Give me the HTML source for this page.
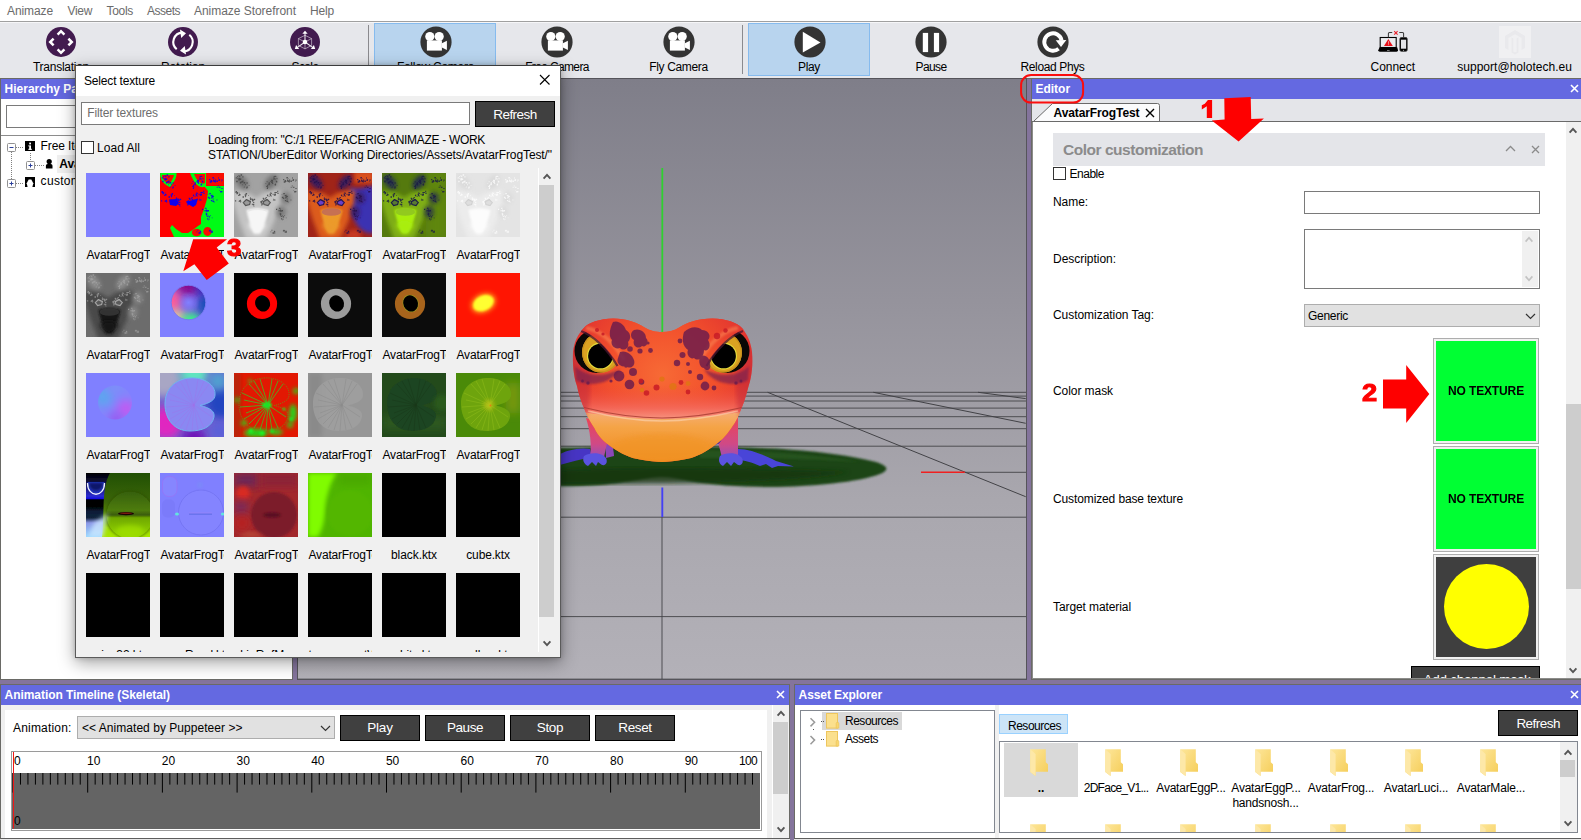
<!DOCTYPE html>
<html>
<head>
<meta charset="utf-8">
<title>Animaze Editor</title>
<style>
*{box-sizing:border-box;margin:0;padding:0}
html,body{width:1581px;height:840px;overflow:hidden;background:#84749c}
body{font-family:"Liberation Sans",sans-serif;font-size:12px;color:#000;position:relative}
.abs{position:absolute}
.t{position:absolute;white-space:nowrap;line-height:14px}
#menubar{left:0;top:0;width:1581px;height:21px;background:#fff}
#menubar .t{color:#6b6b6b}
#menuline{left:0;top:21px;width:1581px;height:1px;background:#a0a0a0}
#toolbar{left:0;top:22px;width:1581px;height:56px;background:#e6e7eb}
#toolline{left:0;top:78px;width:1581px;height:1px;background:#6a6a66}
.sel{position:absolute;background:#b8d4ee;border:1px solid #86bbee}
.ic{position:absolute;width:34px;height:34px;overflow:visible}
.sep{position:absolute;top:25px;width:1px;height:49px;background:#8a8a8e}
.title{position:absolute;height:20px;background:#6469e1}
.title .t{color:#fff}
.btn{position:absolute;background:#404040;border:1px solid #000}
.btn .t{color:#fff}
.cb{position:absolute;width:13px;height:13px;background:#fff;border:1px solid #333}
.inp{position:absolute;background:#fff;border:1px solid #7a7a7a}
.combo{position:absolute;background:#e1e1e1;border:1px solid #adadad}
.th{position:absolute;width:64px;height:64px;overflow:hidden}
.lbl{position:absolute;width:64px;height:16px;overflow:hidden}
.sb{position:absolute;background:#f0f0f0}
.thumb{position:absolute;background:#cdcdcd}
</style>
</head>
<body>

<svg width="0" height="0" style="position:absolute"><defs><path id="spk" d="M5.9,9.4h1.2v1.2h-1.2zM7.4,8.1h1.5v1.5h-1.5zM8.4,7.6h1.2v1.2h-1.2zM6.4,6.0h0.7v0.7h-0.7zM9.5,9.1h1.5v1.5h-1.5zM8.0,11.5h0.7v0.7h-0.7zM5.5,1.9h0.7v0.7h-0.7zM11.1,11.3h0.9v0.9h-0.9zM7.7,9.1h0.7v0.7h-0.7zM6.7,8.9h0.7v0.7h-0.7zM11.6,9.4h1v1h-1zM4.4,2.3h0.7v0.7h-0.7zM10.3,13.4h0.7v0.7h-0.7zM5.2,5.3h1.2v1.2h-1.2zM14.6,12.2h0.9v0.9h-0.9zM12.9,9.6h1v1h-1zM2.0,4.2h0.9v0.9h-0.9zM8.3,3.2h1.2v1.2h-1.2zM4.8,5.0h0.9v0.9h-0.9zM12.2,14.4h1.2v1.2h-1.2zM5.4,3.2h1v1h-1zM9.8,14.2h0.7v0.7h-0.7zM4.3,6.1h1.5v1.5h-1.5zM3.3,4.7h1v1h-1zM1.6,4.4h1.2v1.2h-1.2zM4.8,2.8h0.9v0.9h-0.9zM3.2,3.1h0.9v0.9h-0.9zM12.4,13.7h1.2v1.2h-1.2zM4.6,5.2h1.5v1.5h-1.5zM5.7,5.5h1.5v1.5h-1.5zM2.2,7.7h1.5v1.5h-1.5zM6.6,1.3h1.5v1.5h-1.5zM12.8,13.4h1v1h-1zM5.9,8.8h1.5v1.5h-1.5zM41.0,5.7h0.9v0.9h-0.9zM36.3,8.0h0.7v0.7h-0.7zM38.8,6.0h0.7v0.7h-0.7zM42.5,4.8h0.7v0.7h-0.7zM40.4,5.3h0.9v0.9h-0.9zM42.5,5.3h1v1h-1zM34.5,10.1h0.9v0.9h-0.9zM34.7,8.9h1v1h-1zM35.0,11.5h0.7v0.7h-0.7zM37.0,8.6h0.7v0.7h-0.7zM40.3,3.1h0.9v0.9h-0.9zM33.1,11.8h1.2v1.2h-1.2zM32.0,13.0h0.7v0.7h-0.7zM32.7,12.8h1.2v1.2h-1.2zM41.4,10.2h0.7v0.7h-0.7zM32.6,8.2h1v1h-1zM37.0,6.8h1.2v1.2h-1.2zM37.2,8.4h1.5v1.5h-1.5zM41.4,3.1h0.9v0.9h-0.9zM32.8,14.8h1.2v1.2h-1.2zM41.8,8.1h1.5v1.5h-1.5zM39.7,5.2h1.2v1.2h-1.2zM38.2,10.0h1v1h-1zM39.2,4.7h0.9v0.9h-0.9zM33.3,13.7h1v1h-1zM41.7,7.0h0.7v0.7h-0.7zM34.1,10.9h0.9v0.9h-0.9zM39.5,3.2h1.2v1.2h-1.2zM37.5,7.0h1.5v1.5h-1.5zM40.6,11.0h1.5v1.5h-1.5zM40.6,2.7h1v1h-1zM34.8,10.2h1.2v1.2h-1.2zM38.0,8.9h0.9v0.9h-0.9zM31.5,10.1h0.7v0.7h-0.7zM53.6,6.9h1v1h-1zM61.4,6.5h1.2v1.2h-1.2zM50.6,7.1h1.5v1.5h-1.5zM58.0,4.5h1v1h-1zM54.9,7.6h0.9v0.9h-0.9zM52.6,8.2h0.7v0.7h-0.7zM53.0,6.8h1.2v1.2h-1.2zM53.6,7.8h1.2v1.2h-1.2zM55.2,6.6h1v1h-1zM54.0,5.4h0.7v0.7h-0.7zM49.8,8.5h1v1h-1zM55.0,6.5h0.7v0.7h-0.7zM52.4,4.0h1.5v1.5h-1.5zM53.2,6.5h0.9v0.9h-0.9zM59.2,6.1h0.9v0.9h-0.9zM54.7,8.2h1.2v1.2h-1.2zM49.1,6.1h1.2v1.2h-1.2zM61.0,8.4h0.7v0.7h-0.7zM58.4,6.5h1.5v1.5h-1.5zM56.4,7.5h1.5v1.5h-1.5zM50.6,7.7h1.5v1.5h-1.5zM49.7,8.3h1.5v1.5h-1.5zM2.8,19.6h0.7v0.7h-0.7zM5.2,19.8h0.7v0.7h-0.7zM5.0,20.9h1.5v1.5h-1.5zM1.6,17.9h1.5v1.5h-1.5zM4.2,21.8h1.2v1.2h-1.2zM2.9,19.0h1.2v1.2h-1.2zM8.5,23.3h1.5v1.5h-1.5zM3.3,19.6h1v1h-1zM1.4,19.0h0.9v0.9h-0.9zM2.0,18.1h1v1h-1zM2.4,19.7h1.5v1.5h-1.5zM1.4,18.9h0.9v0.9h-0.9zM17.1,25.4h1.2v1.2h-1.2zM18.0,26.9h1.5v1.5h-1.5zM15.9,25.8h1.5v1.5h-1.5zM15.8,24.8h1v1h-1zM19.5,26.6h0.9v0.9h-0.9zM11.0,23.3h0.9v0.9h-0.9zM20.0,25.8h1.2v1.2h-1.2zM10.6,21.2h0.9v0.9h-0.9zM11.4,22.3h0.7v0.7h-0.7zM11.2,22.6h1v1h-1zM10.8,21.4h1.5v1.5h-1.5zM19.1,29.1h1.2v1.2h-1.2zM11.6,20.1h1.5v1.5h-1.5zM19.5,26.7h0.7v0.7h-0.7zM10.9,23.1h0.7v0.7h-0.7zM16.1,24.3h0.7v0.7h-0.7zM17.9,25.8h1.5v1.5h-1.5zM14.1,22.1h0.7v0.7h-0.7zM35.9,22.1h1v1h-1zM40.5,20.9h1.5v1.5h-1.5zM36.6,22.4h1.2v1.2h-1.2zM38.5,20.7h1v1h-1zM35.8,20.9h0.9v0.9h-0.9zM35.6,20.6h1.5v1.5h-1.5zM36.6,19.7h1.2v1.2h-1.2zM41.9,18.9h1v1h-1zM39.8,21.2h1.5v1.5h-1.5zM43.3,17.7h1v1h-1zM40.4,18.9h1.5v1.5h-1.5zM43.2,18.3h0.9v0.9h-0.9zM36.4,19.3h0.7v0.7h-0.7zM43.4,19.8h1.2v1.2h-1.2zM31.9,26.1h1.2v1.2h-1.2zM34.6,22.8h1v1h-1zM28.9,25.1h1.5v1.5h-1.5zM27.9,28.7h0.7v0.7h-0.7zM28.7,24.8h1.2v1.2h-1.2zM27.1,29.1h0.9v0.9h-0.9zM27.0,27.8h1.2v1.2h-1.2zM26.5,28.7h1.5v1.5h-1.5zM31.5,24.2h1v1h-1zM29.5,25.9h1v1h-1zM33.3,21.6h0.9v0.9h-0.9zM31.1,25.3h1v1h-1zM28.0,27.2h1v1h-1zM32.9,22.0h1.2v1.2h-1.2zM32.3,24.1h0.7v0.7h-0.7zM26.2,28.2h0.9v0.9h-0.9zM4.9,27.2h1.2v1.2h-1.2zM0.9,27.4h0.9v0.9h-0.9zM1.0,27.3h1.2v1.2h-1.2zM4.7,28.1h1v1h-1zM6.1,28.6h1v1h-1zM6.0,26.8h1v1h-1zM6.3,27.8h1v1h-1zM4.8,28.2h0.9v0.9h-0.9zM39.8,26.7h0.9v0.9h-0.9zM38.9,26.8h0.7v0.7h-0.7zM39.4,25.7h0.7v0.7h-0.7zM39.6,26.2h0.7v0.7h-0.7zM40.6,26.6h0.9v0.9h-0.9zM39.7,26.5h0.9v0.9h-0.9zM51.7,22.6h0.7v0.7h-0.7zM53.7,28.6h0.9v0.9h-0.9zM51.2,24.7h0.9v0.9h-0.9zM49.2,25.1h1v1h-1zM48.7,24.2h0.9v0.9h-0.9zM52.9,23.1h1v1h-1zM49.6,20.0h1.2v1.2h-1.2zM53.7,28.8h0.7v0.7h-0.7zM48.9,20.5h0.7v0.7h-0.7zM52.9,27.5h1v1h-1zM51.6,21.7h1v1h-1zM51.4,23.3h1.5v1.5h-1.5zM51.1,27.2h1v1h-1zM51.2,24.6h1v1h-1zM47.9,23.7h1.5v1.5h-1.5zM50.7,21.9h1v1h-1zM52.4,27.6h1.5v1.5h-1.5zM52.2,22.7h1.5v1.5h-1.5zM52.7,25.5h1v1h-1zM56.5,26.5h0.9v0.9h-0.9zM50.9,27.0h1.2v1.2h-1.2zM47.6,21.4h0.7v0.7h-0.7zM48.0,37.0h1v1h-1zM45.2,34.7h1.2v1.2h-1.2zM45.5,36.9h1.5v1.5h-1.5zM46.6,37.8h1v1h-1zM47.9,42.1h0.7v0.7h-0.7zM47.2,43.0h1v1h-1zM47.1,45.2h1.2v1.2h-1.2zM49.2,45.8h0.7v0.7h-0.7zM49.3,43.4h0.9v0.9h-0.9zM46.1,36.6h0.9v0.9h-0.9zM46.2,37.7h1v1h-1zM51.8,44.6h0.7v0.7h-0.7zM45.6,37.8h0.7v0.7h-0.7zM50.1,42.3h0.7v0.7h-0.7zM47.3,37.1h1.5v1.5h-1.5zM44.4,37.3h0.9v0.9h-0.9zM45.7,39.8h1v1h-1zM46.2,42.3h1v1h-1zM45.8,40.4h1.5v1.5h-1.5zM48.8,43.2h1.2v1.2h-1.2zM42.0,35.8h1.2v1.2h-1.2zM48.1,46.6h0.7v0.7h-0.7zM40.0,57.9h1.2v1.2h-1.2zM40.1,59.3h1.2v1.2h-1.2zM39.8,57.8h1v1h-1zM36.4,58.4h0.9v0.9h-0.9zM38.5,59.3h1.5v1.5h-1.5zM37.5,56.8h0.9v0.9h-0.9zM50.5,59.4h0.7v0.7h-0.7zM49.9,57.3h1.2v1.2h-1.2zM51.3,57.8h1.5v1.5h-1.5zM51.4,58.7h1.2v1.2h-1.2zM48.9,57.2h1.2v1.2h-1.2zM49.5,56.7h0.9v0.9h-0.9zM61.2,18.1h1.2v1.2h-1.2zM57.8,12.1h0.7v0.7h-0.7zM59.2,13.8h1.2v1.2h-1.2zM59.4,16.9h0.7v0.7h-0.7zM61.4,14.9h1.2v1.2h-1.2zM58.1,13.5h0.7v0.7h-0.7zM60.2,18.0h1.5v1.5h-1.5zM56.7,13.8h1v1h-1zM19.6,33.1h0.7v0.7h-0.7zM17.8,30.7h1v1h-1zM18.1,30.7h1v1h-1zM18.8,30.9h1.5v1.5h-1.5zM27.4,30.0h0.9v0.9h-0.9zM28.1,30.9h0.7v0.7h-0.7zM27.8,30.3h1.2v1.2h-1.2zM27.2,31.2h1.2v1.2h-1.2z"/><filter id="f1" x="-20%" y="-20%" width="140%" height="140%"><feGaussianBlur stdDeviation="1"/></filter><filter id="f2" x="-30%" y="-30%" width="160%" height="160%"><feGaussianBlur stdDeviation="2.2"/></filter><filter id="f4" x="-40%" y="-40%" width="180%" height="180%"><feGaussianBlur stdDeviation="4"/></filter><filter id="f05"><feGaussianBlur stdDeviation=".5"/></filter><filter id="f03"><feGaussianBlur stdDeviation=".3"/></filter><path id="chin" d="M12.5,37 Q23,33.5 34.5,37 Q33,47 26,60 H20 Q14,47 12.5,37 Z"/><path id="pad" d="M30,5 C44,4 56,12 55,22 C55,27 50,30 40,32.5 C50,35 55,38 54,44 C52,54 42,58 30,58 C14,58 5,46 5,31 C5,16 15,6 30,5 Z"/><g id="rays" fill="none" stroke-width=".7"><path d="M34,32 L8,20 M34,32 L6,34 M34,32 L10,46 M34,32 L20,55 M34,32 L32,58 M34,32 L44,55 M34,32 L15,11 M34,32 L26,6 M34,32 L38,6 M34,32 L49,11 M34,32 L52,44 M34,32 L12,40 M34,32 L10,27 M34,32 L20,8 M34,32 L26,57 M34,32 L38,57 M34,32 L44,8 M34,32 L15,51"/></g><linearGradient id="fg" x1="0" y1="0" x2="1" y2="1"><stop offset="0" stop-color="#fde69a"/><stop offset="1" stop-color="#f5cd58"/></linearGradient></defs></svg>
<div id="menubar" class="abs">
<span class="t" style="left:7.00px;top:3.84px;font-size:12px;line-height:14px;letter-spacing:-0.098px;">Animaze</span>
<span class="t" style="left:67.50px;top:3.84px;font-size:12px;line-height:14px;letter-spacing:-0.324px;">View</span>
<span class="t" style="left:106.50px;top:3.84px;font-size:12px;line-height:14px;letter-spacing:-0.303px;">Tools</span>
<span class="t" style="left:147.00px;top:3.84px;font-size:12px;line-height:14px;letter-spacing:-0.502px;">Assets</span>
<span class="t" style="left:194.00px;top:3.84px;font-size:12px;line-height:14px;letter-spacing:-0.040px;">Animaze Storefront</span>
<span class="t" style="left:310.00px;top:3.84px;font-size:12px;line-height:14px;letter-spacing:-0.170px;">Help</span>
</div><div id="menuline" class="abs"></div>
<div id="toolbar" class="abs"></div><div class="abs" style="left:0;top:22px;width:1581px;height:1px;background:#f6f6f8"></div>
<div class="sel" style="left:374px;top:23px;width:122px;height:53px"></div>
<div class="sel" style="left:748px;top:23px;width:122px;height:53px"></div>
<div class="sep" style="left:368px"></div><div class="sep" style="left:742px"></div>
<svg class="ic" style="left:44px;top:25px" viewBox="-17 -17 34 34"><circle r="15.0" fill="#421b4f"/><g fill="none" stroke="#fff" stroke-width="2.5"><polyline transform="rotate(0)" points="-3.4,-7.4 0,-10.8 3.4,-7.4"/><polyline transform="rotate(90)" points="-3.4,-7.4 0,-10.8 3.4,-7.4"/><polyline transform="rotate(180)" points="-3.4,-7.4 0,-10.8 3.4,-7.4"/><polyline transform="rotate(270)" points="-3.4,-7.4 0,-10.8 3.4,-7.4"/></g></svg>
<svg class="ic" style="left:166px;top:25px" viewBox="-17 -17 34 34"><circle r="15.0" fill="#421b4f"/><g fill="none" stroke="#fff" stroke-width="2.1"><path d="M-6.3,7.2 A9.4,9.4 0 0 1 -0.5,-9.4"/><path d="M6.3,-7.2 A9.4,9.4 0 0 1 0.5,9.4"/></g><g fill="#fff"><polygon points="-3,-12.6 3,-8.8 -1.8,-4.0"/><polygon points="3,12.6 -3,8.8 1.8,4.0"/></g></svg>
<svg class="ic" style="left:288px;top:25px" viewBox="-17 -17 34 34"><circle r="15.0" fill="#421b4f"/><g fill="none" stroke="#fff" stroke-opacity=".55" stroke-width="0.9"><polygon points="0,-6.7 6.6,-3.4 6.6,3.4 0,6.9 -6.6,3.4 -6.6,-3.4"/><path d="M-6.6,-3.4 L0,0 L6.6,-3.4 M0,0 V6.9"/></g><g stroke="#fff" stroke-width="1.05" fill="none" stroke-opacity=".9"><path d="M0,0 V-9 M0,0 L-7.6,5.4 M0,0 L7.6,5.4"/></g><g fill="#fff"><circle r="2.3"/><polygon points="0,-11.2 -2.7,-8.2 2.7,-8.2"/><polygon points="-10.2,7 -8.9,2.9 -5.9,6.9"/><polygon points="10.2,7 8.9,2.9 5.9,6.9"/></g></svg>
<svg class="ic" style="left:418.8px;top:25px" viewBox="-17 -17 34 34"><circle r="15.6" fill="#343434"/><g fill="#fff"><circle cx="-6.2" cy="-5.5" r="4.6"/><circle cx="3.2" cy="-5.5" r="4.6"/><rect x="-9.1" y="-1.6" width="15" height="10.2"/><polygon points="5.9,1.2 10.9,-1.2 10.9,8.1 5.9,5.6"/></g></svg>
<svg class="ic" style="left:540.1px;top:25px" viewBox="-17 -17 34 34"><circle r="15.6" fill="#343434"/><g fill="#fff"><circle cx="-6.2" cy="-5.5" r="4.6"/><circle cx="3.2" cy="-5.5" r="4.6"/><rect x="-9.1" y="-1.6" width="15" height="10.2"/><polygon points="5.9,1.2 10.9,-1.2 10.9,8.1 5.9,5.6"/></g></svg>
<svg class="ic" style="left:662.1px;top:25px" viewBox="-17 -17 34 34"><circle r="15.6" fill="#343434"/><g fill="#fff"><circle cx="-6.2" cy="-5.5" r="4.6"/><circle cx="3.2" cy="-5.5" r="4.6"/><rect x="-9.1" y="-1.6" width="15" height="10.2"/><polygon points="5.9,1.2 10.9,-1.2 10.9,8.1 5.9,5.6"/></g></svg>
<svg class="ic" style="left:793px;top:25px" viewBox="-17 -17 34 34"><circle r="15.6" fill="#343434"/><polygon fill="#fff" points="-7.2,-10.3 -7.2,10.6 10.5,0.4"/></svg>
<svg class="ic" style="left:914px;top:25px" viewBox="-17 -17 34 34"><circle r="15.6" fill="#343434"/><rect fill="#fff" x="-8.2" y="-9.1" width="5.3" height="19.2"/><rect fill="#fff" x="2.9" y="-9.1" width="5.2" height="19.2"/></svg>
<svg class="ic" style="left:1036px;top:25px" viewBox="-17 -17 34 34"><circle r="15.6" fill="#343434"/><path fill="none" stroke="#fff" stroke-width="3.9" d="M5.6,6.7 A8.7,8.7 0 1 1 8.6,-1.5"/><polygon fill="#fff" points="2.7,-1.8 13.3,-2.0 8.0,5.1"/></svg>
<svg class="abs" style="left:1370px;top:24px;width:50px;height:34px" viewBox="0 0 50 34">
<rect x="10.2" y="13.5" width="16" height="10" fill="#ecedf0" stroke="#000" stroke-width="1.1"/>
<path d="M9.6,23.2 H27.2 L28,26.3 Q28,27.7 26.6,27.7 H9.8 Q8.2,27.7 8.3,26.3 Z" fill="#000"/>
<rect x="17" y="26" width="2.6" height="1" fill="#777"/>
<polygon points="18.4,15 22.8,21.9 14,21.9" fill="#e8111a"/>
<rect x="18.05" y="17.2" width=".8" height="2.6" fill="#f6b0b0"/><rect x="18.05" y="20.3" width=".8" height=".8" fill="#f6b0b0"/>
<rect x="29.9" y="13.5" width="7.3" height="13.8" rx="1.4" fill="#000" stroke="#333" stroke-width=".8"/>
<rect x="31" y="15.7" width="5.1" height="9" fill="#e2e3e7"/>
<circle cx="33.55" cy="26.2" r=".5" fill="#ddd"/>
<path d="M18.4,13.2 V9.6 Q18.4,8.5 19.5,8.5 H22.2 M29.3,8.5 H32.5 Q33.6,8.5 33.6,9.6 V13.2" fill="none" stroke="#3a3a3a" stroke-width="1.05"/>
<path d="M24.2,7.2 L27.6,10.6 M27.6,7.2 L24.2,10.6" stroke="#e8202a" stroke-width="1.1" fill="none"/>
</svg>
<div class="abs" style="left:1499px;top:26px;width:32px;height:32px;background:#f0f0f2"><svg viewBox="0 0 32 32" width="32" height="32"><path d="M16,4 L26,10 V22 L22.5,24 V12 L16,8.2 L9.5,12 V24 L6,22 V10 Z M14.3,12.5 V25.5 L16,26.6 L17.7,25.5 V12.5 L19.5,11.5 V26.6 L16,28.6 L12.5,26.6 V11.5 Z" fill="#e9e9ec"/></svg></div>
<span class="t" style="left:33.00px;top:59.84px;font-size:12px;line-height:14px;letter-spacing:-0.265px;">Translation</span>
<span class="t" style="left:161.00px;top:59.84px;font-size:12px;line-height:14px;letter-spacing:-0.087px;">Rotation</span>
<span class="t" style="left:291.50px;top:59.84px;font-size:12px;line-height:14px;letter-spacing:-0.604px;">Scale</span>
<span class="t" style="left:396.90px;top:59.84px;font-size:12px;line-height:14px;letter-spacing:-0.269px;">Follow Camera</span>
<span class="t" style="left:525.20px;top:59.84px;font-size:12px;line-height:14px;letter-spacing:-0.645px;">Free Camera</span>
<span class="t" style="left:649.30px;top:59.84px;font-size:12px;line-height:14px;letter-spacing:-0.361px;">Fly Camera</span>
<span class="t" style="left:798.00px;top:59.84px;font-size:12px;line-height:14px;letter-spacing:-0.336px;">Play</span>
<span class="t" style="left:915.50px;top:59.84px;font-size:12px;line-height:14px;letter-spacing:-0.605px;">Pause</span>
<span class="t" style="left:1020.50px;top:59.84px;font-size:12px;line-height:14px;letter-spacing:-0.367px;">Reload Phys</span>
<span class="t" style="left:1370.60px;top:59.84px;font-size:12px;line-height:14px;letter-spacing:-0.042px;">Connect</span>
<span class="t" style="left:1457.25px;top:59.84px;font-size:12px;line-height:14px;letter-spacing:0.023px;">support@holotech.eu</span>
<div id="toolline" class="abs"></div>
<div class="abs" style="left:0;top:78px;width:293px;height:602px;background:#fff;border:1px solid #6a6a66"></div>
<div class="title" style="left:1px;top:79px;width:291px"><span class="t" style="left:3.60px;top:2.84px;font-size:12px;line-height:14px;font-weight:bold;">Hierarchy Panel</span></div>
<div class="inp" style="left:6px;top:105px;width:281px;height:23px"></div>
<div class="abs" style="left:1px;top:135px;width:291px;height:1px;background:#8c8c8c"></div>
<svg class="abs" style="left:0;top:136px;width:80px;height:60px" viewBox="0 136 80 60">
<g stroke="#808080" stroke-width="1" stroke-dasharray="1 1" fill="none"><path d="M11.5,152 V179 M16,147.5 H24 M30.5,153 V161 M35,165.5 H44 M16,183.5 H24"/></g>
<g fill="#fff" stroke="#919191"><rect x="7.5" y="143.5" width="8" height="8" rx="1"/><rect x="26.5" y="161.5" width="8" height="8" rx="1"/><rect x="7.5" y="179.5" width="8" height="8" rx="1"/></g>
<g stroke="#2a3f9a" stroke-width="1" fill="none"><path d="M9.5,147.5 H13.5 M28.5,165.5 H32.5 M30.5,163.5 V167.5 M9.5,183.5 H13.5 M11.5,181.5 V185.5"/></g>
<rect x="25" y="141" width="10" height="10" fill="#000"/><rect x="29.2" y="142.6" width="1.8" height="1.8" fill="#fff"/><rect x="29.2" y="145.4" width="1.8" height="4.4" fill="#fff"/><rect x="28.3" y="145.4" width="1" height="1" fill="#fff"/><rect x="28.3" y="148.8" width="3.6" height="1" fill="#fff"/>
<circle cx="49.2" cy="161.6" r="2.6" fill="#000"/><path d="M45.9,168.6 V165.8 Q45.9,164 47.6,164 H50.8 Q52.5,164 52.5,165.8 V168.6 Z" fill="#000"/>
<rect x="25" y="177" width="10" height="10" fill="#000"/><path d="M28.7,179.4 H31.3 L33.3,183.2 L32.4,187 H27.6 L26.7,183.2 Z" fill="#fff"/>
</svg>
<div class="abs" style="left:57px;top:155px;width:80px;height:18px;background:#f0f0f0"></div>
<span class="t" style="left:40.60px;top:138.84px;font-size:12px;line-height:14px;letter-spacing:-0.135px;">Free Items</span>
<span class="t" style="left:59.20px;top:156.84px;font-size:12px;line-height:14px;font-weight:bold;">AvatarFrogTest</span>
<span class="t" style="left:40.60px;top:174.34px;font-size:12px;line-height:14px;letter-spacing:0.310px;">customization</span>
<div class="abs" style="left:297px;top:78px;width:730px;height:602px;background:#55545a"></div>
<svg class="abs" style="left:298px;top:79px;width:728px;height:600px" viewBox="298 79 728 600">
<defs>
<linearGradient id="bg" x1="0" y1="79" x2="0" y2="679" gradientUnits="userSpaceOnUse"><stop offset="0" stop-color="#7f7e89"/><stop offset=".37" stop-color="#95939c"/><stop offset=".7" stop-color="#a9a7ae"/><stop offset="1" stop-color="#b3b1b8"/></linearGradient>
<radialGradient id="head" cx="662" cy="375" r="95" gradientUnits="userSpaceOnUse"><stop offset="0" stop-color="#f76a35"/><stop offset=".55" stop-color="#f2502c"/><stop offset="1" stop-color="#e23530"/></radialGradient>
<linearGradient id="jaw" x1="0" y1="408" x2="0" y2="462" gradientUnits="userSpaceOnUse"><stop offset="0" stop-color="#f6b080"/><stop offset=".35" stop-color="#f5a447"/><stop offset="1" stop-color="#f08a1c"/></linearGradient>
<linearGradient id="lip" x1="0" y1="385" x2="0" y2="418" gradientUnits="userSpaceOnUse"><stop offset="0" stop-color="#f0483a" stop-opacity="0"/><stop offset=".7" stop-color="#f46a5c" stop-opacity=".9"/><stop offset="1" stop-color="#f78f7c"/></linearGradient>
<linearGradient id="leg" x1="0" y1="420" x2="0" y2="468" gradientUnits="userSpaceOnUse"><stop offset="0" stop-color="#e8445a"/><stop offset=".5" stop-color="#d04a86"/><stop offset=".85" stop-color="#8a50c0"/><stop offset="1" stop-color="#5a4cd8"/></linearGradient>
<radialGradient id="iris" cx=".5" cy=".5" r=".5"><stop offset="0" stop-color="#e0a21c"/><stop offset=".8" stop-color="#d9a322"/><stop offset="1" stop-color="#e7d430"/></radialGradient>
<filter id="b1"><feGaussianBlur stdDeviation="1.2"/></filter><filter id="b2"><feGaussianBlur stdDeviation="2.2"/></filter><filter id="b05"><feGaussianBlur stdDeviation=".6"/></filter>
<clipPath id="hc"><path id="hp" d="M583.8,328 C588,323 600,318.6 613.3,318.6 C626,318.6 638,323 643.8,327 C650,331 656,332 662,332 C668,332 674,331 680,327 C686,323 698,318.6 712.4,318.6 C726,318.6 737,323 742,328 C747,334 751,342 752,352 C753,364 752,376 748.6,386 C746,396 744,403 741,409 C738,418 735,423 731.4,428 C726,436 720,442 712.4,447 C702,454 694,458 683.8,459.5 C676,461 668,462 662,462 C656,462 648,461 640,459.5 C630,458 622,454 611.4,447 C604,442 598,436 594.3,428 C591,423 588,418 584.8,410 C582,403 579,396 577,386 C573.5,376 572.5,364 573,352 C574,342 578,334 583.8,328 Z"/></clipPath>
</defs>
<rect x="298" y="79" width="728" height="600" fill="url(#bg)"/><rect x="298" y="678" width="728" height="1" fill="#55545a" opacity=".4"/>
<g stroke="#444448" stroke-width="1" fill="none" opacity=".9">
<path d="M298,392.3 H1026 M298,396.1 H1026 M298,401 H1026 M298,408.1 H1026 M298,416.7 H1026 M298,428.7 H1026 M298,446.2 H1026 M964.8,472.3 H1026 M298,517.2 H1026 M298,616.6 H1026 M662,517.2 V679"/>
<path d="M767.6,392.3 L1025.7,496.7 M873.3,392.3 L1025.7,423.3 M978,392.3 L1025.7,398.6" stroke="#38383c"/>
</g>
<line x1="662.3" y1="168" x2="662.3" y2="335" stroke="#2fd030" stroke-width="1.8"/>
<line x1="921" y1="472.3" x2="964.8" y2="472.3" stroke="#f02020" stroke-width="1.5"/>

<path filter="url(#b1)" d="M540,449 C600,446 700,446 760,448 C800,449 850,455 876,462 C888,466 890,470 880,474 C860,482 810,487 770,487 C740,487 712,485 690,481 C680,479 670,477 662,477 C650,477 630,482 600,485 C580,486.5 560,486.5 540,486 Z" fill="#1d4519"/>
<path filter="url(#b2)" d="M560,470 C640,466 760,468 850,472 C800,482 700,484 560,484 Z" fill="#143610" opacity=".8"/>
<path filter="url(#b1)" d="M700,450 C760,450 820,455 860,462 C800,458 740,458 700,458 Z" fill="#2a5a22" opacity=".7"/>
<line x1="662.3" y1="487.5" x2="662.3" y2="517" stroke="#4440f4" stroke-width="1.9"/>
<g filter="url(#b05)">
<path d="M738,449 C750,449 764,455 776,461 L794,466.5 L778,466 L772,468 L766,464 L760,466 C752,462 744,461 738,459 Z" fill="#4a44d8"/>
<path d="M556,456 C566,450 580,447 590,449 L592,457 C582,459 570,462 556,466 Z" fill="#4636c4"/><path d="M604,430 C610,436 614,448 614,456 L606,458 C606,448 604,438 602,432 Z" fill="#8a46b8"/>
<path d="M586,418 C590,430 592,446 590,456 L604,458 C606,446 610,432 612,424 Z" fill="url(#leg)"/>
<path d="M712,424 C716,436 720,448 722,458 L738,456 C738,444 738,430 738,416 Z" fill="url(#leg)"/>
<path d="M584,456 C590,452 602,452 606,458 C608,462 606,466 602,465 L598,462 L596,466 L592,462 L588,466 C584,464 582,460 584,456 Z" fill="#5a52e0"/>
<path d="M720,456 C726,452 738,452 742,458 C744,462 742,466 738,465 L734,462 L731,466 L727,462 L723,466 C719,464 718,460 720,456 Z" fill="#5a52e0"/>
<path d="M712,430 C716,426 722,428 722,436 C722,442 718,446 714,444 Z" fill="#3a30b0"/>
</g>
<use href="#hp" fill="url(#head)"/>
<g clip-path="url(#hc)">
<rect x="560" y="385" width="210" height="34" fill="url(#lip)"/>
<path d="M560,408 C600,416 640,419 662,419 C684,419 724,416 764,408 V470 H560 Z" fill="url(#jaw)"/>
<path d="M584,407.5 C610,414 640,418 662,418 C684,418 714,414 742,407.5" stroke="#a83a30" stroke-width="1.2" fill="none" opacity=".8"/>
<path d="M588,411 C612,417 642,421 662,421 C682,421 712,417 738,411" stroke="#fbd0a8" stroke-width="1.6" fill="none" opacity=".7" filter="url(#b05)"/>
<ellipse cx="662" cy="448" rx="50" ry="14" fill="#f19526" opacity=".6" filter="url(#b2)"/>
<ellipse cx="580" cy="385" rx="10" ry="40" fill="#c02a3a" opacity=".5" filter="url(#b2)"/>
<ellipse cx="746" cy="385" rx="10" ry="40" fill="#c02a3a" opacity=".5" filter="url(#b2)"/>
<!-- eyes -->
<ellipse cx="597" cy="351" rx="22.5" ry="22" fill="#0a0806"/>
<ellipse cx="601" cy="352.5" rx="19" ry="20" fill="#d9a222"/>
<ellipse cx="601" cy="352.5" rx="18.4" ry="19.4" fill="none" stroke="#c8901c" stroke-width="1.2"/>
<circle cx="600.4" cy="356" r="13.4" fill="#e6de3c"/>
<circle cx="600.4" cy="356" r="12.3" fill="#000"/>
<ellipse cx="727" cy="351" rx="22.5" ry="22" fill="#0a0806"/>
<ellipse cx="723" cy="352.5" rx="19" ry="20" fill="#d9a222"/>
<ellipse cx="723" cy="352.5" rx="18.4" ry="19.4" fill="none" stroke="#c8901c" stroke-width="1.2"/>
<circle cx="723.6" cy="356" r="13.4" fill="#e6de3c"/>
<circle cx="723.6" cy="356" r="12.3" fill="#000"/>
<!-- brows -->
<path d="M572,326 L581.5,330.5 C592,334 606,346 617.5,365.5 L628,375 L650,372 L662,350 L662,318 L600,310 Z" fill="url(#head)"/>
<path d="M752,326 L742.5,330.5 C732,334 718,346 706.5,365.5 L696,375 L674,372 L662,350 L662,318 L724,310 Z" fill="url(#head)"/>
<path d="M581,331 C592,335 606,347 617.5,366" stroke="#4a1430" stroke-width="2.2" fill="none" opacity=".75" filter="url(#b05)"/>
<path d="M743,331 C732,335 718,347 706.5,366" stroke="#4a1430" stroke-width="2.2" fill="none" opacity=".75" filter="url(#b05)"/>
<path d="M586,328 C600,330 614,342 624,360" stroke="#fb8a56" stroke-width="4" fill="none" opacity=".55" filter="url(#b1)"/>
<path d="M738,328 C724,330 710,342 700,360" stroke="#fb8a56" stroke-width="4" fill="none" opacity=".55" filter="url(#b1)"/>
<path d="M575,366 C584,376 604,378 620,369 C612,384 588,388 576,380 Z" fill="#7a2250" opacity=".7" filter="url(#b1)"/>
<path d="M749,366 C740,376 720,378 704,369 C712,384 736,388 748,380 Z" fill="#7a2250" opacity=".7" filter="url(#b1)"/>
<!-- spots -->
<g fill="#6a1f4e" opacity=".82" filter="url(#b05)">
<path d="M613,322 C618,320 624,324 626,330 C630,332 632,338 628,342 C630,348 624,352 620,348 C614,350 610,344 612,340 C608,336 610,328 613,322 Z"/>
<path d="M634,330 C640,328 646,332 646,338 C650,342 646,348 642,346 C638,350 632,346 634,340 C630,338 630,332 634,330 Z"/>
<path d="M620,352 C626,350 632,354 634,360 C636,366 630,370 626,366 C620,368 616,362 618,358 Z"/>
<circle cx="630" cy="349" r="2.8"/><circle cx="640" cy="351" r="2.6"/><circle cx="650.5" cy="350.5" r="2.4"/><circle cx="648" cy="343" r="1.6"/><circle cx="616" cy="336" r="2.2"/>
<circle cx="633" cy="372" r="4"/><circle cx="629.5" cy="384.5" r="4.8"/><circle cx="619" cy="376" r="5.4"/><circle cx="641.5" cy="382" r="2.8"/><circle cx="626" cy="366" r="1.8"/><circle cx="611" cy="381" r="1.6"/>
<path d="M684,332 C690,326 698,326 702,330 C708,330 712,336 708,340 C712,346 708,352 704,350 C704,358 698,362 694,358 C690,360 686,354 688,350 C682,346 682,338 684,332 Z"/>
<path d="M700,356 C706,354 710,358 710,364 C712,370 706,372 704,368 C700,368 698,362 700,356 Z"/>
<circle cx="680" cy="341" r="2.4"/><circle cx="682.5" cy="355" r="3"/><circle cx="677" cy="363" r="3.2"/><circle cx="688" cy="364" r="2"/><circle cx="700" cy="377" r="3.2"/><circle cx="705" cy="386" r="4.4"/><circle cx="714" cy="388" r="2.4"/><circle cx="690" cy="372" r="2"/>
<circle cx="588" cy="383" r="1.7"/><circle cx="582.5" cy="381" r="1.5"/><circle cx="736" cy="383" r="1.7"/><circle cx="741" cy="381" r="1.5"/>
</g>
<g fill="#c81c28" opacity=".85" filter="url(#b05)"><circle cx="646.5" cy="393" r="2.8"/><circle cx="656.5" cy="387.5" r="3"/><circle cx="641" cy="381" r="2.4"/><circle cx="688" cy="392" r="2.4"/><circle cx="681" cy="382.5" r="2.4"/><circle cx="717" cy="336" r="3.2"/><circle cx="725.5" cy="330.5" r="2.2"/><circle cx="597" cy="330" r="2"/><circle cx="603" cy="334" r="1.6"/></g>
<g fill="#e27418" opacity=".9" filter="url(#b05)"><circle cx="662" cy="379" r="2.6"/><circle cx="673" cy="386.5" r="3.6"/><circle cx="688" cy="383.5" r="2.4"/><circle cx="642" cy="390" r="2.2"/></g>
</g>
</svg>
<div class="abs" style="left:1031px;top:78px;width:550px;height:602px;background:#fff;border-left:1px solid #6a6a66;border-top:1px solid #6a6a66;border-bottom:1px solid #6a6a66"></div>
<div class="title" style="left:1032px;top:79px;width:549px"><span class="t" style="left:3.40px;top:2.84px;font-size:12px;line-height:14px;font-weight:bold;">Editor</span></div>
<svg class="abs" style="left:1570.0px;top:83.5px;width:9px;height:9px" viewBox="-1 -1 9 9"><path d="M0,0 L7,7 M7,0 L0,7" stroke="#fff" stroke-width="1.6" fill="none"/></svg>
<div class="abs" style="left:1032px;top:122px;width:549px;height:557px;border-left:1px solid #8c8c8a;border-bottom:1px solid #8c8c8a"></div>
<div class="abs" style="left:1032px;top:99px;width:549px;height:22px;background:#e4e5e9"></div>
<div class="abs" style="left:1032px;top:121px;width:549px;height:1px;background:#6a6a6a"></div>
<svg class="abs" style="left:1033px;top:102px;width:130px;height:21px" viewBox="1033 102 130 21"><path d="M1034,121 L1052.5,103.5 H1157.5 Q1159.5,103.5 1159.5,105.5 V121" fill="#fbfbfc" stroke="#6a6a6a" stroke-width="1"/></svg>
<span class="t" style="left:1053.60px;top:105.84px;font-size:12px;line-height:14px;letter-spacing:-0.111px;font-weight:bold;">AvatarFrogTest</span>
<svg class="abs" style="left:1144.5px;top:108.0px;width:10px;height:10px" viewBox="-1 -1 10 10"><path d="M0,0 L8,8 M8,0 L0,8" stroke="#000" stroke-width="1.4" fill="none"/></svg>
<div class="abs" style="left:1053px;top:133px;width:492px;height:33px;background:#e4e5e9"></div>
<span class="t" style="left:1063.00px;top:140.93px;font-size:15.5px;line-height:18px;letter-spacing:-0.473px;font-weight:bold;color:#8b8b8b;">Color customization</span>
<svg class="abs" style="left:1504.5px;top:145px;width:11px;height:7px" viewBox="0 0 11 7"><polyline points="1,6 5.5,1.5 10,6" fill="none" stroke="#8b8b8b" stroke-width="1.3"/></svg>
<svg class="abs" style="left:1530.5px;top:144.5px;width:9px;height:9px" viewBox="-1 -1 9 9"><path d="M0,0 L7,7 M7,0 L0,7" stroke="#8b8b8b" stroke-width="1.3" fill="none"/></svg>
<div class="cb" style="left:1053px;top:167px"></div>
<span class="t" style="left:1069.50px;top:166.84px;font-size:12px;line-height:14px;letter-spacing:-0.478px;">Enable</span>
<span class="t" style="left:1053.00px;top:194.84px;font-size:12px;line-height:14px;letter-spacing:-0.069px;">Name:</span>
<div class="inp" style="left:1304px;top:191px;width:236px;height:23px"></div>
<span class="t" style="left:1053.00px;top:252.14px;font-size:12px;line-height:14px;letter-spacing:-0.030px;">Description:</span>
<div class="inp" style="left:1304px;top:229px;width:236px;height:60px"></div>
<div class="abs" style="left:1522px;top:231px;width:16px;height:56px;background:#f0f0f0"></div>
<svg class="abs" style="left:1523.2px;top:235.3px;width:12px;height:10px" viewBox="-6 -5 12 10"><polyline points="-3.4,1.6 0,-2.2 3.4,1.6" fill="none" stroke="#c2c2c2" stroke-width="1.6"/></svg>
<svg class="abs" style="left:1523.2px;top:273px;width:12px;height:10px" viewBox="-6 -5 12 10"><polyline points="-3.4,-1.6 0,2.2 3.4,-1.6" fill="none" stroke="#c2c2c2" stroke-width="1.6"/></svg>
<span class="t" style="left:1053.00px;top:307.84px;font-size:12px;line-height:14px;letter-spacing:-0.046px;">Customization Tag:</span>
<div class="combo" style="left:1304px;top:304px;width:236px;height:23px"></div>
<span class="t" style="left:1308.00px;top:308.84px;font-size:12px;line-height:14px;letter-spacing:-0.288px;">Generic</span>
<svg class="abs" style="left:1525px;top:312.5px;width:11px;height:7px" viewBox="0 0 11 7"><polyline points="1,1 5.5,5.5 10,1" fill="none" stroke="#333" stroke-width="1.2"/></svg>
<div class="abs" style="left:1433px;top:338px;width:106px;height:106px;background:#f0f0f0;border:1px solid #adadad"></div>
<div class="abs" style="left:1436px;top:341px;width:100px;height:100px;background:#00ff33"></div>
<span class="t" style="left:1448.00px;top:384.34px;font-size:12px;line-height:14px;letter-spacing:-0.134px;font-weight:bold;transform:scaleY(1.08);">NO TEXTURE</span>
<span class="t" style="left:1053.00px;top:383.84px;font-size:12px;line-height:14px;letter-spacing:-0.068px;">Color mask</span>
<div class="abs" style="left:1433px;top:446px;width:106px;height:106px;background:#f0f0f0;border:1px solid #adadad"></div>
<div class="abs" style="left:1436px;top:449px;width:100px;height:100px;background:#00ff33"></div>
<span class="t" style="left:1448.00px;top:492.34px;font-size:12px;line-height:14px;letter-spacing:-0.134px;font-weight:bold;transform:scaleY(1.08);">NO TEXTURE</span>
<span class="t" style="left:1053.00px;top:491.84px;font-size:12px;line-height:14px;letter-spacing:-0.119px;">Customized base texture</span>
<div class="abs" style="left:1433px;top:554px;width:106px;height:106px;background:#f0f0f0;border:1px solid #adadad"></div>
<div class="abs" style="left:1436px;top:557px;width:100px;height:100px;background:#3f3f3f"><div class="abs" style="left:8px;top:7px;width:85px;height:85px;border-radius:50%;background:#ffff00"></div></div>
<span class="t" style="left:1053.00px;top:599.84px;font-size:12px;line-height:14px;letter-spacing:-0.091px;">Target material</span>
<div class="abs" style="left:1411px;top:666px;width:129px;height:12px;overflow:hidden"><div class="btn" style="left:0;top:0;width:129px;height:26px"><span class="t" style="left:11.60px;top:4.72px;font-size:13.5px;line-height:16px;letter-spacing:-0.267px;">Add channel mask</span></div></div>
<div class="sb" style="left:1566px;top:122px;width:15px;height:556px"></div>
<div class="thumb" style="left:1566px;top:404px;width:15px;height:185px"></div>
<svg class="abs" style="left:1567.3px;top:126.19999999999999px;width:12px;height:10px" viewBox="-6 -5 12 10"><polyline points="-3.4,1.6 0,-2.2 3.4,1.6" fill="none" stroke="#555" stroke-width="1.9"/></svg>
<svg class="abs" style="left:1567.3px;top:665px;width:12px;height:10px" viewBox="-6 -5 12 10"><polyline points="-3.4,-1.6 0,2.2 3.4,-1.6" fill="none" stroke="#555" stroke-width="1.9"/></svg>
<svg class="abs" style="left:1015px;top:70px;width:440px;height:360px;overflow:visible" viewBox="1015 70 440 360"><rect x="1021.1" y="75.1" width="62" height="27.5" rx="10" fill="none" stroke="#fb0d0d" stroke-width="2"/><polygon points="1224.3,98.2 1250.7,97 1251.2,118.9 1263.9,118.6 1238.6,141.4 1211.8,120.6 1224.6,119.6" fill="#fe0000"/><polygon points="1383,379.6 1406.2,379.6 1406.2,365 1429.3,394 1406.2,423 1406.2,408.5 1383,408.5" fill="#fe0000"/></svg>
<svg class="abs" style="left:1198px;top:98px;width:18px;height:22px" viewBox="1198 98 18 22"><polygon points="1212.1,100 1212.1,118 1206.8,118 1206.8,106.3 1201.8,109.4 1201.8,105.3 1204.8,103.7 1207.9,100" fill="#fe0000"/></svg>
<span class="t" style="left:1362.00px;top:379.96px;font-size:23.5px;line-height:27px;font-weight:bold;color:#fe0000;-webkit-text-stroke:1px #fe0000;transform:scaleX(1.16);transform-origin:0 0;">2</span>
<div class="abs" style="left:0;top:684px;width:790px;height:155px;background:#f0f0f0;border:1px solid #6a6a66;border-bottom:1px solid #5e5e5e"></div><div class="abs" style="left:0;top:839px;width:790px;height:1px;background:#e8e8e8"></div><div class="abs" style="left:772px;top:705px;width:1px;height:133px;background:#fff"></div>
<div class="title" style="left:1px;top:685px;width:788px"><span class="t" style="left:3.60px;top:2.84px;font-size:12px;line-height:14px;letter-spacing:-0.060px;font-weight:bold;">Animation Timeline (Skeletal)</span></div>
<svg class="abs" style="left:775.5px;top:690.0px;width:9px;height:9px" viewBox="-1 -1 9 9"><path d="M0,0 L7,7 M7,0 L0,7" stroke="#fff" stroke-width="1.6" fill="none"/></svg>
<div class="abs" style="left:5px;top:710px;width:762px;height:128px;background:#fff"></div>
<span class="t" style="left:13.00px;top:720.84px;font-size:12px;line-height:14px;letter-spacing:0.180px;">Animation:</span>
<div class="combo" style="left:77px;top:716px;width:258px;height:23px"></div>
<span class="t" style="left:82.00px;top:720.84px;font-size:12px;line-height:14px;letter-spacing:0.039px;">&lt;&lt; Animated by Puppeteer &gt;&gt;</span>
<svg class="abs" style="left:320px;top:724.5px;width:11px;height:7px" viewBox="0 0 11 7"><polyline points="1,1 5.5,5.5 10,1" fill="none" stroke="#333" stroke-width="1.2"/></svg>
<div class="btn" style="left:340px;top:715px;width:80px;height:26px"><span class="t" style="left:26.25px;top:4.32px;font-size:13.5px;line-height:16px;letter-spacing:-0.191px;">Play</span></div>
<div class="btn" style="left:425px;top:715px;width:80px;height:26px"><span class="t" style="left:20.90px;top:4.32px;font-size:13.5px;line-height:16px;letter-spacing:-0.416px;">Pause</span></div>
<div class="btn" style="left:510px;top:715px;width:80px;height:26px"><span class="t" style="left:25.70px;top:4.32px;font-size:13.5px;line-height:16px;letter-spacing:-0.293px;">Stop</span></div>
<div class="btn" style="left:595px;top:715px;width:80px;height:26px"><span class="t" style="left:22.30px;top:4.32px;font-size:13.5px;line-height:16px;letter-spacing:-0.373px;">Reset</span></div>
<div class="abs" style="left:11px;top:751px;width:751px;height:80px;background:#fff;border:1px solid #9a9a9a"></div>
<div class="abs" style="left:12px;top:773px;width:748px;height:55.6px;background:#646464"></div>
<svg class="abs" style="left:0;top:751px;width:790px;height:80px" viewBox="0 751 790 80"><path d="M13.00,773 v19.6 M20.47,773 v11.6 M27.94,773 v11.6 M35.41,773 v11.6 M42.88,773 v11.6 M50.35,773 v11.6 M57.82,773 v11.6 M65.29,773 v11.6 M72.76,773 v11.6 M80.23,773 v11.6 M87.70,773 v19.6 M95.17,773 v11.6 M102.64,773 v11.6 M110.11,773 v11.6 M117.58,773 v11.6 M125.05,773 v11.6 M132.52,773 v11.6 M139.99,773 v11.6 M147.46,773 v11.6 M154.93,773 v11.6 M162.40,773 v19.6 M169.87,773 v11.6 M177.34,773 v11.6 M184.81,773 v11.6 M192.28,773 v11.6 M199.75,773 v11.6 M207.22,773 v11.6 M214.69,773 v11.6 M222.16,773 v11.6 M229.63,773 v11.6 M237.10,773 v19.6 M244.57,773 v11.6 M252.04,773 v11.6 M259.51,773 v11.6 M266.98,773 v11.6 M274.45,773 v11.6 M281.92,773 v11.6 M289.39,773 v11.6 M296.86,773 v11.6 M304.33,773 v11.6 M311.80,773 v19.6 M319.27,773 v11.6 M326.74,773 v11.6 M334.21,773 v11.6 M341.68,773 v11.6 M349.15,773 v11.6 M356.62,773 v11.6 M364.09,773 v11.6 M371.56,773 v11.6 M379.03,773 v11.6 M386.50,773 v19.6 M393.97,773 v11.6 M401.44,773 v11.6 M408.91,773 v11.6 M416.38,773 v11.6 M423.85,773 v11.6 M431.32,773 v11.6 M438.79,773 v11.6 M446.26,773 v11.6 M453.73,773 v11.6 M461.20,773 v19.6 M468.67,773 v11.6 M476.14,773 v11.6 M483.61,773 v11.6 M491.08,773 v11.6 M498.55,773 v11.6 M506.02,773 v11.6 M513.49,773 v11.6 M520.96,773 v11.6 M528.43,773 v11.6 M535.90,773 v19.6 M543.37,773 v11.6 M550.84,773 v11.6 M558.31,773 v11.6 M565.78,773 v11.6 M573.25,773 v11.6 M580.72,773 v11.6 M588.19,773 v11.6 M595.66,773 v11.6 M603.13,773 v11.6 M610.60,773 v19.6 M618.07,773 v11.6 M625.54,773 v11.6 M633.01,773 v11.6 M640.48,773 v11.6 M647.95,773 v11.6 M655.42,773 v11.6 M662.89,773 v11.6 M670.36,773 v11.6 M677.83,773 v11.6 M685.30,773 v19.6 M692.77,773 v11.6 M700.24,773 v11.6 M707.71,773 v11.6 M715.18,773 v11.6 M722.65,773 v11.6 M730.12,773 v11.6 M737.59,773 v11.6 M745.06,773 v11.6 M752.53,773 v11.6" stroke="#000" stroke-width="1" fill="none"/><line x1="13.5" y1="752" x2="13.5" y2="828.6" stroke="#f01818" stroke-width="1"/></svg>
<span class="t" style="left:14.00px;top:754.34px;font-size:12px;line-height:14px;">0</span>
<span class="t" style="left:87.10px;top:754.34px;font-size:12px;line-height:14px;">10</span>
<span class="t" style="left:161.80px;top:754.34px;font-size:12px;line-height:14px;">20</span>
<span class="t" style="left:236.50px;top:754.34px;font-size:12px;line-height:14px;">30</span>
<span class="t" style="left:311.20px;top:754.34px;font-size:12px;line-height:14px;">40</span>
<span class="t" style="left:385.90px;top:754.34px;font-size:12px;line-height:14px;">50</span>
<span class="t" style="left:460.60px;top:754.34px;font-size:12px;line-height:14px;">60</span>
<span class="t" style="left:535.30px;top:754.34px;font-size:12px;line-height:14px;">70</span>
<span class="t" style="left:610.00px;top:754.34px;font-size:12px;line-height:14px;">80</span>
<span class="t" style="left:684.70px;top:754.34px;font-size:12px;line-height:14px;">90</span>
<span class="t" style="left:739.00px;top:754.34px;font-size:12px;line-height:14px;letter-spacing:-0.674px;">100</span>
<span class="t" style="left:14.00px;top:813.84px;font-size:12px;line-height:14px;">0</span>
<div class="sb" style="left:773px;top:706px;width:16px;height:132px"></div>
<div class="thumb" style="left:773px;top:722px;width:15px;height:72px"></div>
<svg class="abs" style="left:775px;top:709.2px;width:12px;height:10px" viewBox="-6 -5 12 10"><polyline points="-3.4,1.6 0,-2.2 3.4,1.6" fill="none" stroke="#555" stroke-width="1.9"/></svg>
<svg class="abs" style="left:775px;top:824.4px;width:12px;height:10px" viewBox="-6 -5 12 10"><polyline points="-3.4,-1.6 0,2.2 3.4,-1.6" fill="none" stroke="#555" stroke-width="1.9"/></svg>
<div class="abs" style="left:794px;top:684px;width:787px;height:155px;background:#fff;border-left:1px solid #6a6a66;border-top:1px solid #6a6a66;border-bottom:1px solid #5e5e5e"></div><div class="abs" style="left:794px;top:839px;width:787px;height:1px;background:#e8e8e8"></div>
<div class="title" style="left:795px;top:685px;width:786px"><span class="t" style="left:3.60px;top:2.84px;font-size:12px;line-height:14px;letter-spacing:-0.093px;font-weight:bold;">Asset Explorer</span></div>
<svg class="abs" style="left:1570.0px;top:690.0px;width:9px;height:9px" viewBox="-1 -1 9 9"><path d="M0,0 L7,7 M7,0 L0,7" stroke="#fff" stroke-width="1.6" fill="none"/></svg>
<div class="abs" style="left:995px;top:705px;width:4px;height:133px;background:#f0f0f0"></div>
<div class="abs" style="left:800px;top:710px;width:195px;height:123px;background:#fff;border:1px solid #828790"></div>
<div class="abs" style="left:822px;top:712px;width:80px;height:18px;background:#d9d9d9"></div>
<svg class="abs" style="left:826px;top:713.2px;width:14px;height:16px" viewBox="0 0 14 16"><rect x=".5" y=".5" width="11" height="14.6" fill="#fbe08e" stroke="#eec65e" stroke-width="1"/><path d="M10.2,15.1 V10.4 Q10.2,9.4 11.2,9.4 H11.8 Q12.8,9.4 12.8,10.4 V15.1 Z" fill="#f9d66e" stroke="#eec65e" stroke-width=".8"/></svg>
<svg class="abs" style="left:826px;top:731.2px;width:14px;height:16px" viewBox="0 0 14 16"><rect x=".5" y=".5" width="11" height="14.6" fill="#fbe08e" stroke="#eec65e" stroke-width="1"/><path d="M10.2,15.1 V10.4 Q10.2,9.4 11.2,9.4 H11.8 Q12.8,9.4 12.8,10.4 V15.1 Z" fill="#f9d66e" stroke="#eec65e" stroke-width=".8"/></svg>
<svg class="abs" style="left:808px;top:714px;width:16px;height:32px" viewBox="808 714 16 32"><g fill="none" stroke="#9a9a9a" stroke-width="1.5"><polyline points="810.5,718.2 814.6,722.3 810.5,726.4"/><polyline points="810.5,736 814.6,740.1 810.5,744.2"/></g><g fill="#555"><rect x="821" y="721" width="1" height="1"/><rect x="823" y="721" width="1" height="1"/><rect x="821" y="739" width="1" height="1"/><rect x="823" y="739" width="1" height="1"/><rect x="813" y="729" width="1" height="1"/></g></svg>
<span class="t" style="left:845.00px;top:714.34px;font-size:12px;line-height:14px;letter-spacing:-0.484px;">Resources</span>
<span class="t" style="left:845.00px;top:732.34px;font-size:12px;line-height:14px;letter-spacing:-0.502px;">Assets</span>
<div class="abs" style="left:999px;top:714px;width:69px;height:20px;background:#cce4f7;border:1px solid #99d1ff"></div>
<span class="t" style="left:1008.00px;top:718.84px;font-size:12px;line-height:14px;letter-spacing:-0.484px;">Resources</span>
<div class="btn" style="left:1498px;top:710px;width:80px;height:26px"><span class="t" style="left:17.40px;top:4.52px;font-size:13.5px;line-height:16px;letter-spacing:-0.524px;">Refresh</span></div>
<div class="abs" style="left:999px;top:741px;width:579px;height:92px;background:#fff;border:1px solid #828790;overflow:hidden"></div>
<div class="abs" style="left:1004px;top:743px;width:74px;height:54px;background:#d9d9d9"></div>
<svg class="abs" style="left:1030px;top:749px;width:18px;height:27px" viewBox="0 0 18 27"><path d="M0.3,0.3 H15.8 V13.2 L18,15.2 V22.8 H5.6 V27 L0.3,23 Z" fill="url(#fg)"/><path d="M0.3,0.3 L5.6,5 V27 L0.3,23 Z" fill="#fde8a8"/></svg>
<span class="t" style="left:1037.67px;top:780.84px;font-size:12px;line-height:14px;font-weight:bold;">..</span>
<div class="abs" style="left:1030px;top:824px;width:18px;height:8px;overflow:hidden"><svg class="abs" style="left:0px;top:0px;width:18px;height:27px" viewBox="0 0 18 27"><path d="M0.3,0.3 H15.8 V13.2 L18,15.2 V22.8 H5.6 V27 L0.3,23 Z" fill="url(#fg)"/><path d="M0.3,0.3 L5.6,5 V27 L0.3,23 Z" fill="#fde8a8"/></svg></div>
<svg class="abs" style="left:1105px;top:749px;width:18px;height:27px" viewBox="0 0 18 27"><path d="M0.3,0.3 H15.8 V13.2 L18,15.2 V22.8 H5.6 V27 L0.3,23 Z" fill="url(#fg)"/><path d="M0.3,0.3 L5.6,5 V27 L0.3,23 Z" fill="#fde8a8"/></svg>
<span class="t" style="left:1083.75px;top:781.34px;font-size:12px;line-height:14px;letter-spacing:-0.739px;">2DFace_V1...</span>
<div class="abs" style="left:1105px;top:824px;width:18px;height:8px;overflow:hidden"><svg class="abs" style="left:0px;top:0px;width:18px;height:27px" viewBox="0 0 18 27"><path d="M0.3,0.3 H15.8 V13.2 L18,15.2 V22.8 H5.6 V27 L0.3,23 Z" fill="url(#fg)"/><path d="M0.3,0.3 L5.6,5 V27 L0.3,23 Z" fill="#fde8a8"/></svg></div>
<svg class="abs" style="left:1180px;top:749px;width:18px;height:27px" viewBox="0 0 18 27"><path d="M0.3,0.3 H15.8 V13.2 L18,15.2 V22.8 H5.6 V27 L0.3,23 Z" fill="url(#fg)"/><path d="M0.3,0.3 L5.6,5 V27 L0.3,23 Z" fill="#fde8a8"/></svg>
<span class="t" style="left:1156.35px;top:781.34px;font-size:12px;line-height:14px;letter-spacing:-0.229px;">AvatarEggP...</span>
<div class="abs" style="left:1180px;top:824px;width:18px;height:8px;overflow:hidden"><svg class="abs" style="left:0px;top:0px;width:18px;height:27px" viewBox="0 0 18 27"><path d="M0.3,0.3 H15.8 V13.2 L18,15.2 V22.8 H5.6 V27 L0.3,23 Z" fill="url(#fg)"/><path d="M0.3,0.3 L5.6,5 V27 L0.3,23 Z" fill="#fde8a8"/></svg></div>
<svg class="abs" style="left:1255px;top:749px;width:18px;height:27px" viewBox="0 0 18 27"><path d="M0.3,0.3 H15.8 V13.2 L18,15.2 V22.8 H5.6 V27 L0.3,23 Z" fill="url(#fg)"/><path d="M0.3,0.3 L5.6,5 V27 L0.3,23 Z" fill="#fde8a8"/></svg>
<span class="t" style="left:1231.35px;top:781.34px;font-size:12px;line-height:14px;letter-spacing:-0.229px;">AvatarEggP...</span>
<div class="abs" style="left:1255px;top:824px;width:18px;height:8px;overflow:hidden"><svg class="abs" style="left:0px;top:0px;width:18px;height:27px" viewBox="0 0 18 27"><path d="M0.3,0.3 H15.8 V13.2 L18,15.2 V22.8 H5.6 V27 L0.3,23 Z" fill="url(#fg)"/><path d="M0.3,0.3 L5.6,5 V27 L0.3,23 Z" fill="#fde8a8"/></svg></div>
<svg class="abs" style="left:1330px;top:749px;width:18px;height:27px" viewBox="0 0 18 27"><path d="M0.3,0.3 H15.8 V13.2 L18,15.2 V22.8 H5.6 V27 L0.3,23 Z" fill="url(#fg)"/><path d="M0.3,0.3 L5.6,5 V27 L0.3,23 Z" fill="#fde8a8"/></svg>
<span class="t" style="left:1307.85px;top:781.34px;font-size:12px;line-height:14px;letter-spacing:-0.219px;">AvatarFrog...</span>
<div class="abs" style="left:1330px;top:824px;width:18px;height:8px;overflow:hidden"><svg class="abs" style="left:0px;top:0px;width:18px;height:27px" viewBox="0 0 18 27"><path d="M0.3,0.3 H15.8 V13.2 L18,15.2 V22.8 H5.6 V27 L0.3,23 Z" fill="url(#fg)"/><path d="M0.3,0.3 L5.6,5 V27 L0.3,23 Z" fill="#fde8a8"/></svg></div>
<svg class="abs" style="left:1405px;top:749px;width:18px;height:27px" viewBox="0 0 18 27"><path d="M0.3,0.3 H15.8 V13.2 L18,15.2 V22.8 H5.6 V27 L0.3,23 Z" fill="url(#fg)"/><path d="M0.3,0.3 L5.6,5 V27 L0.3,23 Z" fill="#fde8a8"/></svg>
<span class="t" style="left:1383.75px;top:781.34px;font-size:12px;line-height:14px;letter-spacing:-0.152px;">AvatarLuci...</span>
<div class="abs" style="left:1405px;top:824px;width:18px;height:8px;overflow:hidden"><svg class="abs" style="left:0px;top:0px;width:18px;height:27px" viewBox="0 0 18 27"><path d="M0.3,0.3 H15.8 V13.2 L18,15.2 V22.8 H5.6 V27 L0.3,23 Z" fill="url(#fg)"/><path d="M0.3,0.3 L5.6,5 V27 L0.3,23 Z" fill="#fde8a8"/></svg></div>
<svg class="abs" style="left:1480px;top:749px;width:18px;height:27px" viewBox="0 0 18 27"><path d="M0.3,0.3 H15.8 V13.2 L18,15.2 V22.8 H5.6 V27 L0.3,23 Z" fill="url(#fg)"/><path d="M0.3,0.3 L5.6,5 V27 L0.3,23 Z" fill="#fde8a8"/></svg>
<span class="t" style="left:1456.85px;top:781.34px;font-size:12px;line-height:14px;letter-spacing:-0.168px;">AvatarMale...</span>
<div class="abs" style="left:1480px;top:824px;width:18px;height:8px;overflow:hidden"><svg class="abs" style="left:0px;top:0px;width:18px;height:27px" viewBox="0 0 18 27"><path d="M0.3,0.3 H15.8 V13.2 L18,15.2 V22.8 H5.6 V27 L0.3,23 Z" fill="url(#fg)"/><path d="M0.3,0.3 L5.6,5 V27 L0.3,23 Z" fill="#fde8a8"/></svg></div>
<span class="t" style="left:1232.40px;top:796.34px;font-size:12px;line-height:14px;letter-spacing:-0.202px;">handsnosh...</span>
<div class="sb" style="left:1560px;top:742px;width:17px;height:90px"></div>
<div class="thumb" style="left:1560px;top:760px;width:15px;height:17px"></div>
<svg class="abs" style="left:1561.6px;top:747.7px;width:12px;height:10px" viewBox="-6 -5 12 10"><polyline points="-3.4,1.6 0,-2.2 3.4,1.6" fill="none" stroke="#555" stroke-width="1.9"/></svg>
<svg class="abs" style="left:1561.6px;top:817.5px;width:12px;height:10px" viewBox="-6 -5 12 10"><polyline points="-3.4,-1.6 0,2.2 3.4,-1.6" fill="none" stroke="#555" stroke-width="1.9"/></svg>
<div class="abs" style="left:75px;top:65px;width:486px;height:593px;background:#f0f0f0;border:1px solid #5a5a5a;border-top-color:#3c3c3c;box-shadow:0 5px 16px rgba(0,0,0,.36),0 0 5px rgba(0,0,0,.2)"></div>
<div class="abs" style="left:76px;top:66px;width:484px;height:30px;background:#fff"></div>
<span class="t" style="left:84.00px;top:74.04px;font-size:12px;line-height:14px;letter-spacing:-0.169px;">Select texture</span>
<svg class="abs" style="left:539.25px;top:74.25px;width:11.5px;height:11.5px" viewBox="-1 -1 11.5 11.5"><path d="M0,0 L9.5,9.5 M9.5,0 L0,9.5" stroke="#000" stroke-width="1.1" fill="none"/></svg>
<div class="inp" style="left:81px;top:102px;width:389px;height:23px"></div>
<span class="t" style="left:87.20px;top:106.14px;font-size:12px;line-height:14px;letter-spacing:-0.126px;color:#6d6d6d;">Filter textures</span>
<div class="btn" style="left:475px;top:101px;width:80px;height:26px"><span class="t" style="left:17.20px;top:4.62px;font-size:13.5px;line-height:16px;letter-spacing:-0.524px;">Refresh</span></div>
<div class="cb" style="left:81px;top:141px"></div>
<span class="t" style="left:97.00px;top:140.84px;font-size:12px;line-height:14px;letter-spacing:0.037px;">Load All</span>
<span class="t" style="left:208.00px;top:133.34px;font-size:12px;line-height:14px;letter-spacing:-0.304px;">Loading from: "C:/1 REE/FACERIG ANIMAZE - WORK</span>
<span class="t" style="left:208.00px;top:148.24px;font-size:12px;line-height:14px;letter-spacing:-0.099px;">STATION/UberEditor Working Directories/Assets/AvatarFrogTest/"</span>
<div class="abs" style="left:80px;top:168px;width:459px;height:484px;overflow:hidden">
<svg class="th" style="left:6px;top:5px" viewBox="0 0 64 64"><rect width="64" height="64" fill="#8080ff"/></svg>
<div class="lbl" style="left:6px;top:79px"><span class="t" style="left:0.50px;top:1.14px;font-size:12px;line-height:14px;letter-spacing:-0.191px;">AvatarFrogTest</span></div>
<svg class="th" style="left:80px;top:5px" viewBox="0 0 64 64"><rect width="64" height="64" fill="#fe0000"/><g fill="#00fb12" filter="url(#f05)"><path d="M44,13 H64 V64 H14 L10,55 L12,52 L16,56 L22,60 H28 L34,56 L38,53 L41,51 V44 L44,36 L47,26 L48,18 Z"/><path d="M0,0 H16.5 C17,4 14,10 10,14 C5,12 0,8 0,0 Z M30,0 H46 V13 L44,14 C38,15 34,10 30,0 Z"/></g><g fill="#f80a04" filter="url(#f05)"><path d="M2,2 H14 C13,6 11,9 9,11 C5,9 2,6 2,2 Z M34,1 H45 V10 C41,12 37,8 34,1 Z M46,0 H64 V12 H46 Z"/><ellipse cx="36.5" cy="59.5" rx="4.6" ry="3.8"/><ellipse cx="47.5" cy="58.5" rx="4.2" ry="4.4"/></g><g fill="#0a00f0"><path d="M9,26.5 L17,26 L19,30 L16,33 L10,32 Z M27,28.5 L38,25.5 L36,32 L33,34 L28,31 Z" filter="url(#f03)"/><use href="#spk" opacity=".9"/></g></svg>
<div class="lbl" style="left:80px;top:79px"><span class="t" style="left:0.50px;top:1.14px;font-size:12px;line-height:14px;letter-spacing:-0.191px;">AvatarFrogTest</span></div>
<svg class="th" style="left:154px;top:5px" viewBox="0 0 64 64"><rect width="64" height="64" fill="#a2a2a2"/><path d="M-2,20 C6,16 16,20 22,25 C28,20 38,15 48,19 C46,36 40,50 32,66 H12 C6,50 0,36 -2,20 Z" fill="#c4c4c4" filter="url(#f2)"/><g fill="#727272" filter="url(#f2)"><ellipse cx="8" cy="9" rx="5" ry="8.5" transform="rotate(-40 8 9)"/><ellipse cx="37" cy="9" rx="5" ry="8.5" transform="rotate(40 37 9)"/><ellipse cx="52" cy="25" rx="5" ry="6" opacity=".8"/><ellipse cx="47" cy="39" rx="5" ry="6" opacity=".8"/></g><use href="#chin" fill="#f6f6f6" filter="url(#f1)"/><path d="M14,52 Q22,44 32,52 L25,61 H21 Z" fill="#f6f6f6" filter="url(#f2)"/><use href="#spk" fill="#474747" opacity="0.85" filter="url(#f03)"/><g fill="#9a9a9a" stroke="#555" stroke-width="1.2" filter="url(#f05)"><path d="M9.3,29.6 L12.4,26.6 L16.4,28.6 L15.6,31.6 L11.6,32.6 Z"/><path d="M36.3,29.6 L33.2,26.6 L29.2,28.6 L30,31.6 L34,32.6 Z"/></g><path d="M13.5,38.2 Q23.5,34 33.5,38.2" fill="none" stroke="#e8e8e8" stroke-width="1.2" filter="url(#f05)"/></svg>
<div class="lbl" style="left:154px;top:79px"><span class="t" style="left:0.50px;top:1.14px;font-size:12px;line-height:14px;letter-spacing:-0.191px;">AvatarFrogTest</span></div>
<svg class="th" style="left:228px;top:5px" viewBox="0 0 64 64"><rect width="64" height="64" fill="#a02418"/><path d="M42,14 C50,18 58,14 66,12 V60 C58,62 50,56 46,46 C40,38 40,24 42,14 Z" fill="#3a30b2" filter="url(#f2)"/><path d="M36,66 C40,56 48,54 52,60 L54,66 Z" fill="#c83a20" filter="url(#f2)"/><rect x="46" y="-2" width="20" height="12" fill="#d8501c" filter="url(#f2)"/><path d="M-2,20 C6,16 16,20 22,25 C28,20 38,15 48,19 C46,36 40,50 32,66 H12 C6,50 0,36 -2,20 Z" fill="#dc5c1e" filter="url(#f2)"/><g fill="#3a1a5c" filter="url(#f2)"><ellipse cx="8" cy="9" rx="5" ry="8.5" transform="rotate(-40 8 9)"/><ellipse cx="37" cy="9" rx="5" ry="8.5" transform="rotate(40 37 9)"/><ellipse cx="52" cy="25" rx="5" ry="6" opacity=".8"/><ellipse cx="47" cy="39" rx="5" ry="6" opacity=".8"/></g><use href="#chin" fill="#ec9a2a" filter="url(#f1)"/><path d="M14,52 Q22,44 32,52 L25,61 H21 Z" fill="#ec9a2a" filter="url(#f2)"/><ellipse cx="23.4" cy="39" rx="9.8" ry="3.8" fill="#c06a5a" filter="url(#f05)" opacity=".85"/><use href="#spk" fill="#28104c" opacity="0.85" filter="url(#f03)"/><g fill="#6a40c8" stroke="#2a1450" stroke-width="1.2" filter="url(#f05)"><path d="M9.3,29.6 L12.4,26.6 L16.4,28.6 L15.6,31.6 L11.6,32.6 Z"/><path d="M36.3,29.6 L33.2,26.6 L29.2,28.6 L30,31.6 L34,32.6 Z"/></g></svg>
<div class="lbl" style="left:228px;top:79px"><span class="t" style="left:0.50px;top:1.14px;font-size:12px;line-height:14px;letter-spacing:-0.191px;">AvatarFrogTest</span></div>
<svg class="th" style="left:302px;top:5px" viewBox="0 0 64 64"><rect width="64" height="64" fill="#557a0e"/><rect x="44" y="-2" width="22" height="68" fill="#5f860f" filter="url(#f4)"/><path d="M-2,20 C6,16 16,20 22,25 C28,20 38,15 48,19 C46,36 40,50 32,66 H12 C6,50 0,36 -2,20 Z" fill="#7fae12" filter="url(#f2)"/><g fill="#26304a" filter="url(#f2)"><ellipse cx="8" cy="9" rx="5" ry="8.5" transform="rotate(-40 8 9)"/><ellipse cx="37" cy="9" rx="5" ry="8.5" transform="rotate(40 37 9)"/><ellipse cx="52" cy="25" rx="5" ry="6" opacity=".8"/><ellipse cx="47" cy="39" rx="5" ry="6" opacity=".8"/></g><use href="#chin" fill="#a9ee10" filter="url(#f1)"/><path d="M14,52 Q22,44 32,52 L25,61 H21 Z" fill="#a9ee10" filter="url(#f2)"/><ellipse cx="23.4" cy="39" rx="9.8" ry="3.8" fill="#8ec424" filter="url(#f05)" opacity=".85"/><use href="#spk" fill="#1a1c44" opacity="0.85" filter="url(#f03)"/><g fill="#5a7a30" stroke="#1c1e48" stroke-width="1.2" filter="url(#f05)"><path d="M9.3,29.6 L12.4,26.6 L16.4,28.6 L15.6,31.6 L11.6,32.6 Z"/><path d="M36.3,29.6 L33.2,26.6 L29.2,28.6 L30,31.6 L34,32.6 Z"/></g></svg>
<div class="lbl" style="left:302px;top:79px"><span class="t" style="left:0.50px;top:1.14px;font-size:12px;line-height:14px;letter-spacing:-0.191px;">AvatarFrogTest</span></div>
<svg class="th" style="left:376px;top:5px" viewBox="0 0 64 64"><rect width="64" height="64" fill="#e4e4e4"/><path d="M-2,20 C6,16 16,20 22,25 C28,20 38,15 48,19 C46,36 40,50 32,66 H12 C6,50 0,36 -2,20 Z" fill="#ececec" filter="url(#f2)"/><g fill="#dadada" filter="url(#f2)"><ellipse cx="8" cy="9" rx="5" ry="8.5" transform="rotate(-40 8 9)"/><ellipse cx="37" cy="9" rx="5" ry="8.5" transform="rotate(40 37 9)"/><ellipse cx="52" cy="25" rx="5" ry="6" opacity=".8"/><ellipse cx="47" cy="39" rx="5" ry="6" opacity=".8"/></g><use href="#chin" fill="#fcfcfc" filter="url(#f1)"/><path d="M14,52 Q22,44 32,52 L25,61 H21 Z" fill="#fcfcfc" filter="url(#f2)"/><use href="#spk" fill="#fff" opacity="0.75" filter="url(#f03)"/><g fill="#dedede" stroke="#d2d2d2" stroke-width="1.2" filter="url(#f05)"><path d="M9.3,29.6 L12.4,26.6 L16.4,28.6 L15.6,31.6 L11.6,32.6 Z"/><path d="M36.3,29.6 L33.2,26.6 L29.2,28.6 L30,31.6 L34,32.6 Z"/></g></svg>
<div class="lbl" style="left:376px;top:79px"><span class="t" style="left:0.50px;top:1.14px;font-size:12px;line-height:14px;letter-spacing:-0.191px;">AvatarFrogTest</span></div>
<svg class="th" style="left:6px;top:105px" viewBox="0 0 64 64"><rect width="64" height="64" fill="#6c6c6c"/><path d="M-2,20 C6,16 16,20 22,25 C28,20 38,15 48,19 C46,36 40,50 32,66 H12 C6,50 0,36 -2,20 Z" fill="#4a4a4a" filter="url(#f2)"/><g fill="#8c8c8c" filter="url(#f2)"><ellipse cx="8" cy="9" rx="5" ry="8.5" transform="rotate(-40 8 9)"/><ellipse cx="37" cy="9" rx="5" ry="8.5" transform="rotate(40 37 9)"/><ellipse cx="52" cy="25" rx="5" ry="6" opacity=".8"/><ellipse cx="47" cy="39" rx="5" ry="6" opacity=".8"/></g><use href="#chin" fill="#161616" filter="url(#f1)"/><path d="M14,52 Q22,44 32,52 L25,61 H21 Z" fill="#161616" filter="url(#f2)"/><ellipse cx="23.4" cy="39" rx="9.8" ry="3.8" fill="#383838" filter="url(#f05)" opacity=".85"/><use href="#spk" fill="#a6a6a6" opacity="0.7" filter="url(#f03)"/><g fill="#5a5a5a" stroke="#a4a4a4" stroke-width="1.2" filter="url(#f05)"><path d="M9.3,29.6 L12.4,26.6 L16.4,28.6 L15.6,31.6 L11.6,32.6 Z"/><path d="M36.3,29.6 L33.2,26.6 L29.2,28.6 L30,31.6 L34,32.6 Z"/></g></svg>
<div class="lbl" style="left:6px;top:179px"><span class="t" style="left:0.50px;top:1.14px;font-size:12px;line-height:14px;letter-spacing:-0.191px;">AvatarFrogTest</span></div>
<svg class="th" style="left:80px;top:105px" viewBox="0 0 64 64"><defs><radialGradient id="sph" cx=".5" cy=".5" r=".5"><stop offset="0" stop-color="#8080ff"/><stop offset=".5" stop-color="#8080ff" stop-opacity=".45"/><stop offset="1" stop-color="#8080ff" stop-opacity="0"/></radialGradient><clipPath id="sc"><circle cx="28.5" cy="29.5" r="17.3"/></clipPath></defs><rect width="64" height="64" fill="#8080ff"/><g clip-path="url(#sc)" filter="url(#f05)"><rect x="10" y="11" width="38" height="38" fill="#8060e0"/><circle cx="28" cy="9" r="14" fill="#8a0a90" filter="url(#f4)"/><circle cx="8" cy="28" r="13" fill="#ff5a98" filter="url(#f4)"/><circle cx="16" cy="46" r="10" fill="#f0c098" filter="url(#f4)"/><circle cx="32" cy="52" r="12" fill="#30ff80" filter="url(#f4)"/><circle cx="50" cy="32" r="13" fill="#1850b8" filter="url(#f4)"/><circle cx="44" cy="14" r="9" fill="#3828b8" filter="url(#f4)"/><circle cx="28.5" cy="29.5" r="11" fill="url(#sph)"/></g><circle cx="28.5" cy="29.5" r="17.3" fill="none" stroke="#7878f0" stroke-width="1" filter="url(#f05)"/></svg>
<div class="lbl" style="left:80px;top:179px"><span class="t" style="left:0.50px;top:1.14px;font-size:12px;line-height:14px;letter-spacing:-0.191px;">AvatarFrogTest</span></div>
<svg class="th" style="left:154px;top:105px" viewBox="0 0 64 64"><rect width="64" height="64" fill="#000"/><circle cx="28" cy="30.8" r="15.1" fill="#fe0000"/><ellipse cx="28.6" cy="30.4" rx="7.3" ry="8.3" transform="rotate(-25 28.6 30.4)" fill="#000"/></svg>
<div class="lbl" style="left:154px;top:179px"><span class="t" style="left:0.50px;top:1.14px;font-size:12px;line-height:14px;letter-spacing:-0.191px;">AvatarFrogTest</span></div>
<svg class="th" style="left:228px;top:105px" viewBox="0 0 64 64"><rect width="64" height="64" fill="#0c0c0c"/><circle cx="28" cy="30.8" r="15.1" fill="#9c9c9c"/><ellipse cx="28.6" cy="30.4" rx="7.3" ry="8.3" transform="rotate(-25 28.6 30.4)" fill="#000"/></svg>
<div class="lbl" style="left:228px;top:179px"><span class="t" style="left:0.50px;top:1.14px;font-size:12px;line-height:14px;letter-spacing:-0.191px;">AvatarFrogTest</span></div>
<svg class="th" style="left:302px;top:105px" viewBox="0 0 64 64"><rect width="64" height="64" fill="#0c0c0c"/><circle cx="28" cy="30.8" r="15.1" fill="#a8641c"/><ellipse cx="28.6" cy="30.4" rx="7.9" ry="8.9" transform="rotate(-25 28.6 30.4)" fill="#9a9a20"/><ellipse cx="28.6" cy="30.4" rx="7.3" ry="8.3" transform="rotate(-25 28.6 30.4)" fill="#000"/></svg>
<div class="lbl" style="left:302px;top:179px"><span class="t" style="left:0.50px;top:1.14px;font-size:12px;line-height:14px;letter-spacing:-0.191px;">AvatarFrogTest</span></div>
<svg class="th" style="left:376px;top:105px" viewBox="0 0 64 64"><rect width="64" height="64" fill="#ff1502"/><ellipse cx="27.4" cy="30.2" rx="13.5" ry="10" transform="rotate(-25 27.4 30.2)" fill="#ff7a18" filter="url(#f2)"/><ellipse cx="27.4" cy="30.2" rx="11" ry="7.6" transform="rotate(-25 27.4 30.2)" fill="#ffff2a" filter="url(#f1)"/><ellipse cx="27.4" cy="30.2" rx="8" ry="5.4" transform="rotate(-25 27.4 30.2)" fill="#ffff30" filter="url(#f1)"/></svg>
<div class="lbl" style="left:376px;top:179px"><span class="t" style="left:0.50px;top:1.14px;font-size:12px;line-height:14px;letter-spacing:-0.191px;">AvatarFrogTest</span></div>
<svg class="th" style="left:6px;top:205px" viewBox="0 0 64 64"><defs><clipPath id="sc2"><circle cx="29" cy="29.5" r="17"/></clipPath></defs><rect width="64" height="64" fill="#8080ff"/><g clip-path="url(#sc2)" filter="url(#f1)"><circle cx="29" cy="29.5" r="18" fill="#8484fc"/><circle cx="17" cy="24" r="10" fill="#5ea4f0" filter="url(#f4)"/><circle cx="40" cy="36" r="9" fill="#c05cf2" filter="url(#f4)"/><circle cx="30" cy="46" r="7" fill="#9858f0" filter="url(#f4)"/><circle cx="30" cy="14" r="7" fill="#7c90f8" filter="url(#f4)"/></g></svg>
<div class="lbl" style="left:6px;top:279px"><span class="t" style="left:0.50px;top:1.14px;font-size:12px;line-height:14px;letter-spacing:-0.191px;">AvatarFrogTest</span></div>
<svg class="th" style="left:80px;top:205px" viewBox="0 0 64 64"><rect width="64" height="64" fill="#7060d0"/><circle cx="4" cy="6" r="18" fill="#a8a6c4" filter="url(#f4)"/><circle cx="34" cy="0" r="14" fill="#60e4c0" filter="url(#f4)"/><circle cx="62" cy="30" r="16" fill="#2244c0" filter="url(#f4)"/><circle cx="6" cy="50" r="16" fill="#e028c0" filter="url(#f4)"/><circle cx="34" cy="66" r="12" fill="#7018b8" filter="url(#f4)"/><circle cx="58" cy="8" r="10" fill="#50a0d0" filter="url(#f4)"/><circle cx="60" cy="58" r="10" fill="#5a60d8" filter="url(#f4)"/><use href="#pad" fill="#8a88f2" stroke="#6fb4f0" stroke-width="1"/><use href="#rays" stroke="#a070e8" opacity=".5"/></svg>
<div class="lbl" style="left:80px;top:279px"><span class="t" style="left:0.50px;top:1.14px;font-size:12px;line-height:14px;letter-spacing:-0.191px;">AvatarFrogTest</span></div>
<svg class="th" style="left:154px;top:205px" viewBox="0 0 64 64"><rect width="64" height="64" fill="#e21802"/><rect x="-2" width="9" height="66" fill="#a82c0a" opacity=".7" filter="url(#f2)"/><g fill="#14e41c" filter="url(#f2)" opacity=".9"><ellipse cx="22" cy="60" rx="12" ry="4.5"/><ellipse cx="42" cy="59" rx="7" ry="3"/><circle cx="10" cy="50" r="3"/><ellipse cx="59" cy="40" rx="4" ry="9"/><circle cx="56" cy="52" r="3"/><circle cx="3" cy="27" r="2.5"/><circle cx="16" cy="8" r="2"/><circle cx="62" cy="18" r="3"/></g><g fill="#1cf024" filter="url(#f1)"><circle cx="17" cy="58" r="2.4"/><circle cx="28" cy="60" r="2.6"/><circle cx="38" cy="58" r="2"/><circle cx="57" cy="46" r="2"/><circle cx="50" cy="36" r="1.6"/><ellipse cx="33" cy="32" rx="5" ry="3"/></g><use href="#rays" stroke="#20e028" opacity=".95"/><use href="#pad" fill="none" stroke="#5aa818" stroke-width=".7" stroke-dasharray="1.2 1" opacity=".9"/></svg>
<div class="lbl" style="left:154px;top:279px"><span class="t" style="left:0.50px;top:1.14px;font-size:12px;line-height:14px;letter-spacing:-0.191px;">AvatarFrogTest</span></div>
<svg class="th" style="left:228px;top:205px" viewBox="0 0 64 64"><rect width="64" height="64" fill="#969696"/><rect x="0" width="14" height="64" fill="#8a8a8a" filter="url(#f2)"/><use href="#pad" fill="#a0a0a0" filter="url(#f05)" opacity=".8"/><use href="#rays" stroke="#8a8a8a" opacity=".7"/></svg>
<div class="lbl" style="left:228px;top:279px"><span class="t" style="left:0.50px;top:1.14px;font-size:12px;line-height:14px;letter-spacing:-0.191px;">AvatarFrogTest</span></div>
<svg class="th" style="left:302px;top:205px" viewBox="0 0 64 64"><rect width="64" height="64" fill="#234a1b"/><rect y="44" width="64" height="12" fill="#2d5a20" filter="url(#f4)"/><use href="#pad" fill="#1f4420" filter="url(#f05)"/><use href="#rays" stroke="#183818" opacity=".7"/><circle cx="60" cy="30" r="8" fill="#2c5a1e" filter="url(#f2)"/></svg>
<div class="lbl" style="left:302px;top:279px"><span class="t" style="left:0.50px;top:1.14px;font-size:12px;line-height:14px;letter-spacing:-0.191px;">AvatarFrogTest</span></div>
<svg class="th" style="left:376px;top:205px" viewBox="0 0 64 64"><rect width="64" height="64" fill="#4a8a08"/><rect x="50" y="10" width="14" height="30" fill="#76980c" filter="url(#f4)"/><use href="#pad" fill="#6ea40e" filter="url(#f05)"/><use href="#rays" stroke="#9cc420" opacity=".55"/><circle cx="33" cy="32" r="5" fill="#c0c418" filter="url(#f2)" opacity=".8"/><circle cx="34.5" cy="32.5" r="1" fill="#e08010"/></svg>
<div class="lbl" style="left:376px;top:279px"><span class="t" style="left:0.50px;top:1.14px;font-size:12px;line-height:14px;letter-spacing:-0.191px;">AvatarFrogTest</span></div>
<svg class="th" style="left:6px;top:305px" viewBox="0 0 64 64"><defs><linearGradient id="g41" x1="0" y1="0" x2="0" y2="1"><stop offset="0" stop-color="#215004"/><stop offset=".45" stop-color="#3c6608"/><stop offset=".72" stop-color="#6a9c04"/><stop offset=".85" stop-color="#a0de00"/><stop offset="1" stop-color="#a8e600"/></linearGradient><linearGradient id="g43" x1="0" y1="0" x2="0" y2="1"><stop offset="0" stop-color="#36600a"/><stop offset=".4" stop-color="#4e7c0c"/><stop offset=".5" stop-color="#3c5c08"/><stop offset=".56" stop-color="#6fa804"/><stop offset="1" stop-color="#9adc00"/></linearGradient><linearGradient id="g42" x1="0" y1="0" x2="0" y2="1"><stop offset="0" stop-color="#000"/><stop offset=".12" stop-color="#0a0a30"/><stop offset=".36" stop-color="#2a2ad0"/><stop offset=".40" stop-color="#1410e0"/><stop offset=".42" stop-color="#000"/><stop offset=".52" stop-color="#000"/><stop offset=".6" stop-color="#0c1c38"/><stop offset=".7" stop-color="#12243c"/><stop offset=".78" stop-color="#8a96e6"/><stop offset="1" stop-color="#9ad8ff"/></linearGradient></defs><rect width="64" height="64" fill="url(#g41)"/><circle cx="44" cy="42" r="24.5" fill="#2c4c06" opacity=".55" filter="url(#f1)"/><circle cx="44" cy="42" r="23.5" fill="url(#g43)" filter="url(#f05)"/><ellipse cx="44" cy="58" rx="14" ry="6" fill="#a6e600" opacity=".6" filter="url(#f2)"/><path d="M0,0 H24 C19,8 18,20 17.5,34 C17,46 17,56 16,64 H0 Z" fill="url(#g42)" filter="url(#f05)"/><path d="M1.5,11 C1.5,24 18.5,24 18.5,11 V9 H1.5 Z" fill="#2434b8" filter="url(#f05)"/><path d="M3,10 C3,20 17,20 17,10 Z" fill="#10186a" filter="url(#f1)"/><path d="M1.5,10 C1.5,25 18.5,25 18.5,10" fill="none" stroke="#eef2ff" stroke-width="1.3" filter="url(#f05)"/><path d="M8,50 L22,40 L17,64 H2 Z" fill="#cfeaff" opacity=".75" filter="url(#f2)"/><ellipse cx="40" cy="40.6" rx="8" ry="1.7" fill="#1a0404"/><ellipse cx="40" cy="40.3" rx="6" ry=".8" fill="#7a1810"/></svg>
<div class="lbl" style="left:6px;top:379px"><span class="t" style="left:0.50px;top:1.14px;font-size:12px;line-height:14px;letter-spacing:-0.191px;">AvatarFrogTest</span></div>
<svg class="th" style="left:80px;top:305px" viewBox="0 0 64 64"><rect width="64" height="64" fill="#8080ff"/><rect x="2.5" y="3.5" width="14.5" height="20" rx="6.5" fill="#8686ff" stroke="#9a72f4" stroke-width=".7"/><rect x="2" y="26.5" width="13" height="18" rx="5" fill="#7a7af8" opacity=".7" filter="url(#f05)"/><circle cx="41" cy="39.5" r="22.5" fill="#8484ff" stroke="#7272f0" stroke-width=".8" filter="url(#f05)"/><rect x="29" y="40.3" width="23" height="1.5" fill="#6470ea" filter="url(#f05)"/><rect x="29" y="39.6" width="23" height=".7" fill="#9a84f8" filter="url(#f05)"/><ellipse cx="17" cy="41" rx="2" ry="1.6" fill="#62e4de" filter="url(#f05)"/><ellipse cx="62.8" cy="41" rx="2" ry="1.6" fill="#62e4de" filter="url(#f05)"/><circle cx="40" cy="12" r="3" fill="#7a8cf8" opacity=".6" filter="url(#f1)"/></svg>
<div class="lbl" style="left:80px;top:379px"><span class="t" style="left:0.50px;top:1.14px;font-size:12px;line-height:14px;letter-spacing:-0.191px;">AvatarFrogTest</span></div>
<svg class="th" style="left:154px;top:305px" viewBox="0 0 64 64"><rect width="64" height="64" fill="#a2282c"/><rect width="24" height="14" fill="#6a2858" filter="url(#f4)"/><circle cx="9" cy="20" r="7" fill="#d82a24" filter="url(#f2)"/><rect x="0" y="28" width="14" height="14" fill="#7a2a5a" filter="url(#f4)"/><circle cx="8" cy="50" r="8" fill="#b82424" filter="url(#f4)"/><rect x="26" y="0" width="38" height="14" fill="#8a2438" filter="url(#f4)"/><circle cx="40" cy="42" r="23" fill="#7c1a2c" filter="url(#f1)"/><ellipse cx="38" cy="42" rx="9" ry="2.5" fill="#5a1024" filter="url(#f1)"/><path d="M4,64 C14,56 22,58 30,64 Z" fill="#b84838" filter="url(#f2)"/></svg>
<div class="lbl" style="left:154px;top:379px"><span class="t" style="left:0.50px;top:1.14px;font-size:12px;line-height:14px;letter-spacing:-0.191px;">AvatarFrogTest</span></div>
<svg class="th" style="left:228px;top:305px" viewBox="0 0 64 64"><rect width="64" height="64" fill="#4fb400"/><path d="M0,0 H30 C22,8 20,20 18,28 C16,40 18,50 10,64 H0 Z" fill="#80fc04" filter="url(#f2)"/><circle cx="42" cy="40" r="23" fill="#52b604" filter="url(#f1)"/><rect x="30" width="34" height="12" fill="#4aa802" filter="url(#f4)"/></svg>
<div class="lbl" style="left:228px;top:379px"><span class="t" style="left:0.50px;top:1.14px;font-size:12px;line-height:14px;letter-spacing:-0.191px;">AvatarFrogTest</span></div>
<svg class="th" style="left:302px;top:305px" viewBox="0 0 64 64"><rect width="64" height="64" fill="#000"/></svg>
<div class="lbl" style="left:302px;top:379px"><span class="t" style="left:9.00px;top:1.14px;font-size:12px;line-height:14px;letter-spacing:-0.076px;">black.ktx</span></div>
<svg class="th" style="left:376px;top:305px" viewBox="0 0 64 64"><rect width="64" height="64" fill="#000"/></svg>
<div class="lbl" style="left:376px;top:379px"><span class="t" style="left:10.25px;top:1.14px;font-size:12px;line-height:14px;letter-spacing:-0.149px;">cube.ktx</span></div>
<svg class="th" style="left:6px;top:405px" viewBox="0 0 64 64"><rect width="64" height="64" fill="#000"/></svg>
<div class="lbl" style="left:6px;top:479px"><span class="t" style="left:2.00px;top:1.14px;font-size:12px;line-height:14px;letter-spacing:-0.064px;">noise32.ktx</span></div>
<svg class="th" style="left:80px;top:405px" viewBox="0 0 64 64"><rect width="64" height="64" fill="#000"/></svg>
<div class="lbl" style="left:80px;top:479px"><span class="t" style="left:0.50px;top:1.14px;font-size:12px;line-height:14px;letter-spacing:-0.200px;">ssaoRand.ktx</span></div>
<svg class="th" style="left:154px;top:405px" viewBox="0 0 64 64"><rect width="64" height="64" fill="#000"/></svg>
<div class="lbl" style="left:154px;top:479px"><span class="t" style="left:0.32px;top:1.14px;font-size:12px;line-height:14px;">skinRefMap</span></div>
<svg class="th" style="left:228px;top:405px" viewBox="0 0 64 64"><rect width="64" height="64" fill="#000"/></svg>
<div class="lbl" style="left:228px;top:479px"><span class="t" style="left:0.50px;top:1.14px;font-size:12px;line-height:14px;letter-spacing:-0.188px;">transparentWhite</span></div>
<svg class="th" style="left:302px;top:405px" viewBox="0 0 64 64"><rect width="64" height="64" fill="#000"/></svg>
<div class="lbl" style="left:302px;top:479px"><span class="t" style="left:9.50px;top:1.14px;font-size:12px;line-height:14px;letter-spacing:-0.187px;">white.ktx</span></div>
<svg class="th" style="left:376px;top:405px" viewBox="0 0 64 64"><rect width="64" height="64" fill="#000"/></svg>
<div class="lbl" style="left:376px;top:479px"><span class="t" style="left:6.50px;top:1.14px;font-size:12px;line-height:14px;letter-spacing:-0.035px;">yellow.ktx</span></div>
</div>
<div class="abs" style="left:538px;top:168px;width:1px;height:484px;background:#fff"></div>
<div class="sb" style="left:539px;top:168px;width:17px;height:484px"></div>
<div class="thumb" style="left:539px;top:185px;width:15px;height:432px"></div>
<svg class="abs" style="left:540.6px;top:172.3px;width:12px;height:10px" viewBox="-6 -5 12 10"><polyline points="-3.4,1.6 0,-2.2 3.4,1.6" fill="none" stroke="#555" stroke-width="1.9"/></svg>
<svg class="abs" style="left:540.5px;top:638.3px;width:12px;height:10px" viewBox="-6 -5 12 10"><polyline points="-3.4,-1.6 0,2.2 3.4,-1.6" fill="none" stroke="#555" stroke-width="1.9"/></svg>
<svg class="abs" style="left:180px;top:236px;width:64px;height:48px" viewBox="180 236 64 48"><polygon points="193.2,239.2 227.1,239.2 216.7,247.5 228.8,263.5 206.7,280 194.4,264.2 183.3,271.3" fill="#fe0000"/></svg>
<span class="t" style="left:227.00px;top:235.36px;font-size:23.5px;line-height:27px;font-weight:bold;color:#fe0000;-webkit-text-stroke:1.1px #fe0000;transform:scaleX(1.1);transform-origin:0 0;">3</span>
</body>
</html>
